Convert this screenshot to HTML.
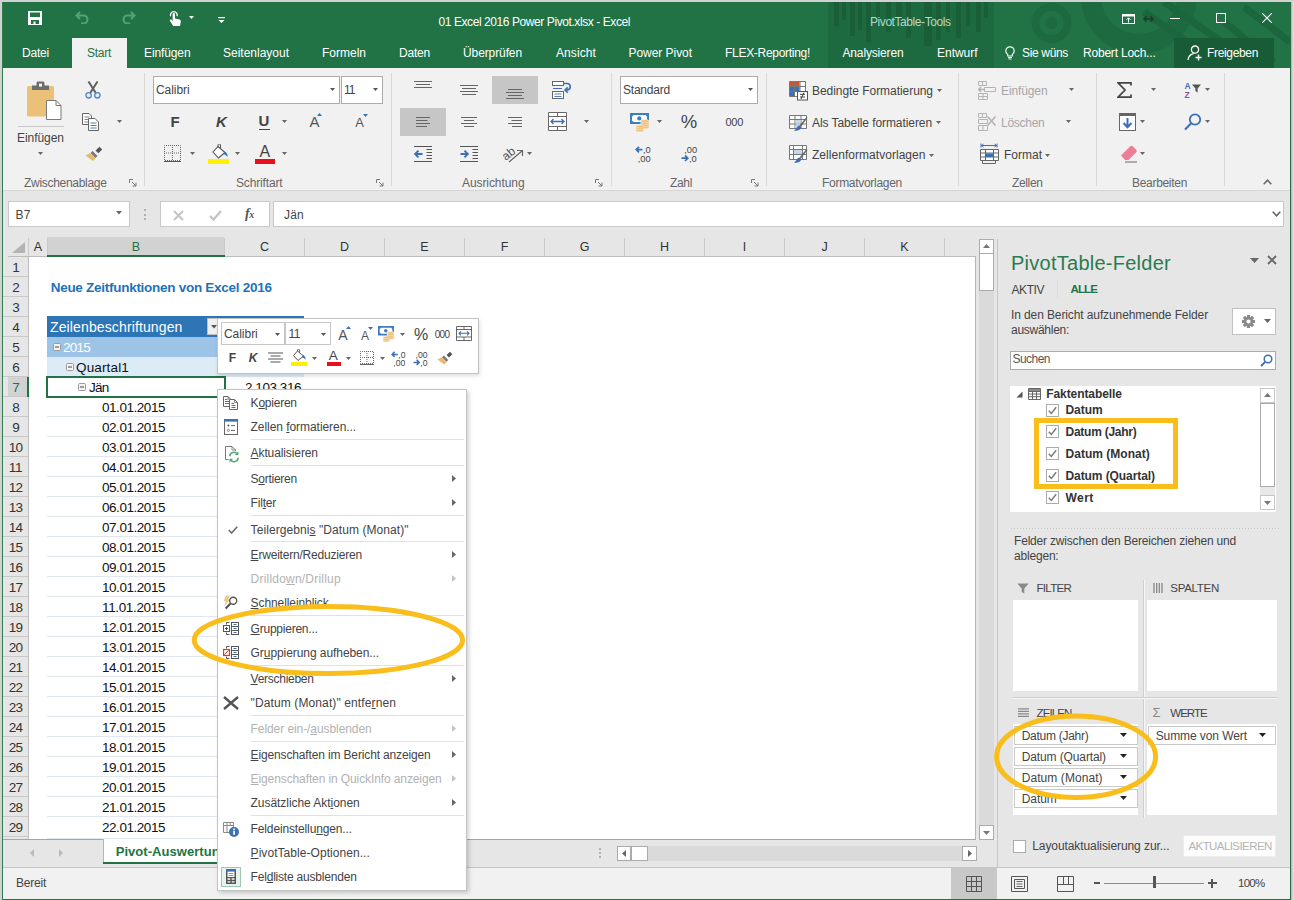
<!DOCTYPE html>
<html><head><meta charset="utf-8"><title>Excel</title>
<style>
html,body{margin:0;padding:0}
body{width:1294px;height:900px;position:relative;overflow:hidden;background:#f1f1f1;font-family:"Liberation Sans",sans-serif;}
.t{position:absolute;white-space:nowrap;overflow:visible}
.r{position:absolute;display:block}
u{text-decoration:underline;text-underline-offset:1px}
</style></head><body>
<!-- p_frame -->
<div class="r" style="left:0px;top:0px;width:1294px;height:900px;background:#d2d2d2;"></div>
<div class="r" style="left:2px;top:2px;width:1289px;height:898px;background:#f1f1f1;"></div>
<div class="r" style="left:2px;top:2px;width:1289px;height:66px;background:#217346;"></div>
<div class="r" style="left:828px;top:2px;width:166px;height:66px;background:#1e6a40;"></div>
<svg class="r" style="left:828px;top:2px;" width="166" height="50" viewBox="0 0 166 50"><rect x="6" y="0" width="5" height="24" fill="#1a5e38"/><rect x="14" y="0" width="4" height="18" fill="#1a5e38"/><rect x="22" y="0" width="5" height="34" fill="#1a5e38"/><rect x="30" y="0" width="4" height="28" fill="#1a5e38"/><rect x="38" y="0" width="5" height="40" fill="#1a5e38"/><rect x="48" y="0" width="4" height="22" fill="#1a5e38"/><rect x="58" y="0" width="5" height="30" fill="#1a5e38"/><rect x="68" y="0" width="6" height="20" fill="#1a5e38"/><rect x="78" y="0" width="5" height="36" fill="#1a5e38"/><rect x="96" y="0" width="8" height="44" fill="#1a5e38"/><rect x="108" y="0" width="5" height="38" fill="#1a5e38"/><rect x="118" y="0" width="4" height="30" fill="#1a5e38"/><rect x="128" y="0" width="5" height="36" fill="#1a5e38"/><rect x="138" y="0" width="4" height="24" fill="#1a5e38"/><rect x="148" y="0" width="5" height="30" fill="#1a5e38"/><rect x="156" y="0" width="4" height="16" fill="#1a5e38"/></svg>
<svg class="r" style="left:994px;top:2px;" width="296" height="66" viewBox="0 0 296 66"><circle cx="57.5" cy="21" r="16" fill="none" stroke="#1e6a40" stroke-width="8"/><circle cx="57.5" cy="21" r="6" fill="#1e6a40"/>
<circle cx="145" cy="-6" r="48" fill="none" stroke="#1e6a40" stroke-width="20"/>
<path d="M150 10 L215 55 M170 0 L235 45 M230 20 L280 60 M250 5 L296 40" stroke="#1c663d" stroke-width="7" fill="none"/></svg>
<div class="r" style="left:1174px;top:38px;width:100px;height:30px;background:#185c37;"></div>
<div class="r" style="left:72px;top:38px;width:55px;height:31px;background:#f1f1f1;"></div>
<svg class="r" style="left:28px;top:11px;" width="14" height="14" viewBox="0 0 14 14"><path d="M0 0H14V14H0Z M2 1.5V6H12V1.5Z M3 9V13H5.5V10.5H7.5V13H11V9Z" fill="#fff" fill-rule="evenodd"/></svg>
<svg class="r" style="left:75px;top:11px;" width="14" height="13" viewBox="0 0 14 13"><path d="M5 1 L1.5 4.5 L5 8 M1.5 4.5 H8.5 A4 4 0 0 1 8.5 12.5 H6" fill="none" stroke="#58a079" stroke-width="2"/></svg>
<svg class="r" style="left:122px;top:11px;" width="14" height="13" viewBox="0 0 14 13"><path d="M9 1 L12.5 4.5 L9 8 M12.5 4.5 H5.5 A4 4 0 0 0 5.5 12.5 H8" fill="none" stroke="#58a079" stroke-width="2"/></svg>
<svg class="r" style="left:168px;top:10px;" width="14" height="16" viewBox="0 0 14 16"><path d="M5.2 16 L2 11 C1.4 9.8 2.6 9 3.6 10 L4.6 11.2 V4.2 C4.6 2.6 7 2.6 7 4.2 V8.6 L11.4 9.6 C12.4 9.8 13 10.6 12.8 11.8 L12 16 Z" fill="#fff"/><path d="M2.6 6.2 A3.4 3.4 0 1 1 9 6.2" fill="none" stroke="#fff" stroke-width="1.3"/></svg>
<svg class="r" style="left:189px;top:16px;" width="5" height="3" viewBox="0 0 5 3"><path d="M0 0H5 L2.5 3 Z" fill="#fff"/></svg>
<svg class="r" style="left:218px;top:17px;" width="7" height="6" viewBox="0 0 7 6"><rect x="0" y="0" width="7" height="1.2" fill="#fff"/><path d="M0.5 3H6.5L3.5 6Z" fill="#fff"/></svg>
<div class="t" style="left:438.50px;top:14px;height:17px;line-height:17px;font-size:12px;color:#fff;letter-spacing:-0.419px;">01 Excel 2016 Power Pivot.xlsx - Excel</div>
<div class="t" style="left:870.00px;top:14px;height:17px;line-height:17px;font-size:12px;color:#b7d7c5;letter-spacing:-0.430px;">PivotTable-Tools</div>
<svg class="r" style="left:1122px;top:14px;" width="13" height="10" viewBox="0 0 13 10"><rect x="0.5" y="0.5" width="12" height="9" fill="none" stroke="#fff"/><rect x="0.5" y="0.5" width="12" height="2" fill="#fff"/><path d="M6.5 8.5V4 M4.5 5.8L6.5 3.8L8.5 5.8" stroke="#fff" fill="none"/></svg>
<svg class="r" style="left:1143px;top:15px;" width="11" height="8" viewBox="0 0 11 8"><path d="M1 4H10 M3.5 1.2L0.8 4L3.5 6.8 M7.5 1.2L10.2 4L7.5 6.8" stroke="#1d3a2a" stroke-width="1.3" fill="none"/></svg>
<div class="r" style="left:1170px;top:18px;width:10px;height:1px;background:#fff;"></div>
<div class="r" style="left:1216px;top:13px;width:10px;height:10px;border:1px solid #fff;box-sizing:border-box;"></div>
<svg class="r" style="left:1262px;top:13px;" width="10" height="10" viewBox="0 0 10 10"><path d="M0 0L10 10M10 0L0 10" stroke="#fff" stroke-width="1.1"/></svg>
<div class="t" style="left:22.00px;top:45px;height:17px;line-height:17px;font-size:12px;color:#fff;letter-spacing:-0.203px;">Datei</div>
<div class="t" style="left:144.00px;top:45px;height:17px;line-height:17px;font-size:12px;color:#fff;letter-spacing:-0.109px;">Einfügen</div>
<div class="t" style="left:223.00px;top:45px;height:17px;line-height:17px;font-size:12px;color:#fff;letter-spacing:-0.004px;">Seitenlayout</div>
<div class="t" style="left:322.00px;top:45px;height:17px;line-height:17px;font-size:12px;color:#fff;letter-spacing:-0.001px;">Formeln</div>
<div class="t" style="left:399.00px;top:45px;height:17px;line-height:17px;font-size:12px;color:#fff;letter-spacing:-0.204px;">Daten</div>
<div class="t" style="left:463.00px;top:45px;height:17px;line-height:17px;font-size:12px;color:#fff;letter-spacing:-0.104px;">Überprüfen</div>
<div class="t" style="left:556.00px;top:45px;height:17px;line-height:17px;font-size:12px;color:#fff;letter-spacing:0.093px;">Ansicht</div>
<div class="t" style="left:628.50px;top:45px;height:17px;line-height:17px;font-size:12px;color:#fff;letter-spacing:-0.048px;">Power Pivot</div>
<div class="t" style="left:725.00px;top:45px;height:17px;line-height:17px;font-size:12px;color:#fff;letter-spacing:-0.292px;">FLEX-Reporting!</div>
<div class="t" style="left:842.50px;top:45px;height:17px;line-height:17px;font-size:12px;color:#fff;letter-spacing:-0.155px;">Analysieren</div>
<div class="t" style="left:937.00px;top:45px;height:17px;line-height:17px;font-size:12px;color:#fff;letter-spacing:-0.026px;">Entwurf</div>
<div class="t" style="left:1022.00px;top:45px;height:17px;line-height:17px;font-size:12px;color:#fff;letter-spacing:-0.336px;">Sie wüns</div>
<div class="t" style="left:1083.00px;top:45px;height:17px;line-height:17px;font-size:12px;color:#fff;letter-spacing:-0.205px;">Robert Loch...</div>
<div class="t" style="left:1207.00px;top:45px;height:17px;line-height:17px;font-size:12px;color:#fff;letter-spacing:-0.337px;">Freigeben</div>
<div class="t" style="left:87.00px;top:45px;height:17px;line-height:17px;font-size:12px;color:#217346;letter-spacing:-0.268px;">Start</div>
<svg class="r" style="left:1005px;top:46px;" width="10" height="14" viewBox="0 0 10 14"><path d="M5 0.7 A4.2 4.2 0 0 1 7.3 8.4 V10H2.7V8.4 A4.2 4.2 0 0 1 5 0.7Z" fill="none" stroke="#fff" stroke-width="1.1"/><path d="M3 11.5H7 M3.5 13H6.5" stroke="#fff" stroke-width="1"/></svg>
<svg class="r" style="left:1187px;top:45px;" width="16" height="16" viewBox="0 0 16 16"><circle cx="8" cy="4.6" r="3.6" fill="none" stroke="#fff" stroke-width="1.3"/><path d="M1 15 C1.5 10.5 4.5 9 6.5 8.6" fill="none" stroke="#fff" stroke-width="1.3"/><path d="M11.5 9.5V15.5 M8.5 12.5H14.5" stroke="#fff" stroke-width="1.4"/></svg>
<!-- p_ribbon -->
<div class="r" style="left:2px;top:190px;width:1289px;height:1px;background:#d6d6d6;"></div>
<div class="r" style="left:2px;top:191px;width:1289px;height:47px;background:#e6e6e6;"></div>
<svg class="r" style="left:26px;top:81px;" width="36" height="39" viewBox="0 0 36 39"><rect x="1" y="5" width="27" height="30.5" rx="1.5" fill="#ebc177"/>
<path d="M6 4.5H10.5V2.2C10.5 1.2 11.2 0.6 12.2 0.6H16.8C17.8 0.6 18.5 1.2 18.5 2.2V4.5H23V9H6Z" fill="#6d6d6d"/><rect x="13" y="2.6" width="3" height="3" fill="#f1f1f1"/>
<path d="M20.5 19.5H30L35 24.5V38.5H20.5Z" fill="#fff" stroke="#7a7a7a" stroke-width="1"/><path d="M30 19.5V24.5H35" fill="none" stroke="#7a7a7a" stroke-width="1"/></svg>
<div class="r" style="left:17.5px;top:126px;width:46.5px;height:1px;background:#c9c9c9;"></div>
<div class="t" style="left:17.00px;top:130px;height:17px;line-height:17px;font-size:12px;color:#444;letter-spacing:-0.047px;">Einfügen</div>
<svg class="r" style="left:38px;top:151.5px;" width="5" height="3" viewBox="0 0 5 3"><path d="M0 0H5 L2.5 3 Z" fill="#666"/></svg>
<svg class="r" style="left:85px;top:81px;" width="16" height="18" viewBox="0 0 16 18"><path d="M3.5 0.5L10.8 12 M12.5 0.5L5.2 12" stroke="#606060" stroke-width="2" fill="none"/><circle cx="3.6" cy="14.3" r="2.7" fill="#e4edf8" stroke="#4f84c8" stroke-width="1.3"/><circle cx="12.4" cy="14.3" r="2.7" fill="#e4edf8" stroke="#4f84c8" stroke-width="1.3"/></svg>
<svg class="r" style="left:82px;top:113px;" width="17" height="18" viewBox="0 0 17 18"><path d="M0.5 0.5H7L9.5 3V11.5H0.5Z" fill="#fff" stroke="#666"/><path d="M2.5 4H7.5M2.5 6.5H7.5M2.5 9H6" stroke="#777" stroke-width="0.9"/>
<path d="M6.5 5.5H13L16.5 9V17.5H6.5Z" fill="#fff" stroke="#666"/><path d="M8.5 10H14.5M8.5 12.5H14.5M8.5 15H14.5" stroke="#3d6fb4" stroke-width="0.9"/></svg>
<svg class="r" style="left:116.5px;top:120px;" width="5" height="3" viewBox="0 0 5 3"><path d="M0 0H5 L2.5 3 Z" fill="#666"/></svg>
<svg class="r" style="left:85px;top:146px;" width="18" height="16" viewBox="0 0 18 16"><path d="M10.5 4.5L14.5 0.8L17.2 3.6L13.3 7.3Z" fill="#555"/><path d="M7.5 5L12.5 10L10.5 12L5.5 7Z" fill="#777"/><path d="M5 7L10.5 12.5L8 15L0.5 9.5Z" fill="#e8b96c"/></svg>
<div class="t" style="left:24.00px;top:175px;height:17px;line-height:17px;font-size:12px;color:#666;letter-spacing:-0.301px;">Zwischenablage</div>
<svg class="r" style="left:129px;top:179px;" width="8" height="8" viewBox="0 0 8 8"><path d="M0.5 4V0.5H4" fill="none" stroke="#777" stroke-width="1"/><path d="M3 3L7 7 M7 3.6V7H3.6" fill="none" stroke="#777" stroke-width="1"/></svg>
<div class="r" style="left:144px;top:73px;width:1px;height:113px;background:#dadada;"></div>
<div class="r" style="left:153px;top:76px;width:187px;height:28px;background:#fff;border:1px solid #ababab;box-sizing:border-box;"></div>
<div class="r" style="left:341px;top:76px;width:42px;height:28px;background:#fff;border:1px solid #ababab;box-sizing:border-box;"></div>
<div class="t" style="left:156.00px;top:82px;height:17px;line-height:17px;font-size:12px;color:#444;letter-spacing:-0.073px;">Calibri</div>
<svg class="r" style="left:329.5px;top:88px;" width="5" height="3" viewBox="0 0 5 3"><path d="M0 0H5 L2.5 3 Z" fill="#555"/></svg>
<div class="t" style="left:344.00px;top:82px;height:17px;line-height:17px;font-size:12px;color:#444;letter-spacing:-0.979px;">11</div>
<svg class="r" style="left:372.5px;top:88px;" width="5" height="3" viewBox="0 0 5 3"><path d="M0 0H5 L2.5 3 Z" fill="#555"/></svg>
<div class="t" style="left:170.42px;top:111px;height:21px;line-height:21px;font-size:15px;color:#444;font-weight:bold;">F</div>
<div class="t" style="left:216.08px;top:111px;height:21px;line-height:21px;font-size:15px;color:#444;font-weight:bold;font-style:italic;">K</div>
<div class="t" style="left:258.58px;top:110px;height:21px;line-height:21px;font-size:15px;color:#444;font-weight:bold;">U</div>
<div class="r" style="left:259px;top:129px;width:10.5px;height:1.2px;background:#444;"></div>
<svg class="r" style="left:281.5px;top:120px;" width="5" height="3" viewBox="0 0 5 3"><path d="M0 0H5 L2.5 3 Z" fill="#666"/></svg>
<div class="t" style="left:309.50px;top:111px;height:21px;line-height:21px;font-size:15px;color:#555;">A</div>
<svg class="r" style="left:317px;top:112.5px;" width="5" height="3" viewBox="0 0 5 3"><path d="M0 3H5L2.5 0Z" fill="#2e75b6"/></svg>
<div class="t" style="left:355.16px;top:114px;height:18px;line-height:18px;font-size:13px;color:#555;">A</div>
<svg class="r" style="left:363px;top:114px;" width="5" height="3" viewBox="0 0 5 3"><path d="M0 0H5L2.5 3Z" fill="#2e75b6"/></svg>
<svg class="r" style="left:164px;top:144.5px;" width="17" height="17" viewBox="0 0 17 17"><path d="M0.5 0.5H16.5V15.5H0.5Z M8.5 0.5V15.5 M0.5 8H16.5" fill="none" stroke="#666" stroke-width="1" stroke-dasharray="1 1" stroke-dashoffset="0.5"/><path d="M0 16.5H17" stroke="#555" stroke-width="1"/></svg>
<svg class="r" style="left:189.5px;top:151.5px;" width="5" height="3" viewBox="0 0 5 3"><path d="M0 0H5 L2.5 3 Z" fill="#666"/></svg>
<svg class="r" style="left:210px;top:144px;" width="20" height="15" viewBox="0 0 20 15"><path d="M8 2.5L15 8.5L8.5 14L3 8Z" fill="#fff" stroke="#555" stroke-width="1.1"/><path d="M8 2.5V0.8C8 -0.2 10.5 -0.2 10.5 0.8V4.5" fill="none" stroke="#555" stroke-width="1"/><path d="M14.5 7.5C17 8.5 18 11 17.5 13C16.5 11.5 15.5 10.5 13 10Z" fill="#3d6fb4"/></svg>
<div class="r" style="left:208px;top:159px;width:21px;height:5px;background:#ffef00;"></div>
<svg class="r" style="left:235px;top:151.5px;" width="5" height="3" viewBox="0 0 5 3"><path d="M0 0H5 L2.5 3 Z" fill="#666"/></svg>
<div class="t" style="left:259.46px;top:141px;height:22px;line-height:22px;font-size:16px;color:#444;">A</div>
<div class="r" style="left:254.5px;top:159px;width:20px;height:5px;background:#e8111b;"></div>
<svg class="r" style="left:281.5px;top:151.5px;" width="5" height="3" viewBox="0 0 5 3"><path d="M0 0H5 L2.5 3 Z" fill="#666"/></svg>
<div class="t" style="left:236.00px;top:175px;height:17px;line-height:17px;font-size:12px;color:#666;letter-spacing:-0.151px;">Schriftart</div>
<svg class="r" style="left:376px;top:179px;" width="8" height="8" viewBox="0 0 8 8"><path d="M0.5 4V0.5H4" fill="none" stroke="#777" stroke-width="1"/><path d="M3 3L7 7 M7 3.6V7H3.6" fill="none" stroke="#777" stroke-width="1"/></svg>
<div class="r" style="left:391px;top:73px;width:1px;height:113px;background:#dadada;"></div>
<div class="r" style="left:491.5px;top:76px;width:46.5px;height:28px;background:#c6c6c6;"></div>
<div class="r" style="left:400px;top:108px;width:46px;height:28px;background:#c6c6c6;"></div>
<svg class="r" style="left:414px;top:81px;" width="40" height="9" viewBox="0 0 40 9"><rect x="0" y="0" width="18" height="1" fill="#666"/><rect x="2" y="3" width="14" height="1" fill="#666"/><rect x="0" y="6" width="18" height="1" fill="#666"/></svg>
<svg class="r" style="left:460px;top:85px;" width="40" height="12" viewBox="0 0 40 12"><rect x="0" y="0" width="18" height="1" fill="#666"/><rect x="2" y="3" width="14" height="1" fill="#666"/><rect x="0" y="6" width="18" height="1" fill="#666"/><rect x="2" y="9" width="14" height="1" fill="#666"/></svg>
<svg class="r" style="left:506px;top:89px;" width="40" height="12" viewBox="0 0 40 12"><rect x="2" y="0" width="14" height="1" fill="#666"/><rect x="0" y="3" width="18" height="1" fill="#666"/><rect x="2" y="6" width="14" height="1" fill="#666"/><rect x="0" y="9" width="18" height="1" fill="#666"/></svg>
<svg class="r" style="left:552px;top:81px;" width="20" height="19" viewBox="0 0 20 19"><rect x="0.5" y="0.5" width="11" height="4" fill="#fff" stroke="#666"/><path d="M1 7.5H10" stroke="#3d6fb4"/><rect x="0.5" y="10.5" width="11" height="7" fill="#fff" stroke="#666"/><path d="M2.5 13H9.5M2.5 15.5H9.5" stroke="#3d6fb4" stroke-width="0.9"/><path d="M12 2.5H15C19.3 2.5 19.3 9 15 9H13.5 M15.8 6.3L13 9L15.8 11.7" fill="none" stroke="#3d6fb4" stroke-width="1.6"/></svg>
<svg class="r" style="left:416px;top:117px;" width="40" height="12" viewBox="0 0 40 12"><rect x="0" y="0" width="14" height="1" fill="#666"/><rect x="0" y="3" width="11.5" height="1" fill="#666"/><rect x="0" y="6" width="14" height="1" fill="#666"/><rect x="0" y="9" width="11" height="1" fill="#666"/></svg>
<svg class="r" style="left:461px;top:117px;" width="40" height="12" viewBox="0 0 40 12"><rect x="0" y="0" width="16" height="1" fill="#666"/><rect x="3" y="3" width="10" height="1" fill="#666"/><rect x="0" y="6" width="16" height="1" fill="#666"/><rect x="3" y="9" width="10" height="1" fill="#666"/></svg>
<svg class="r" style="left:508px;top:117px;" width="40" height="12" viewBox="0 0 40 12"><rect x="0" y="0" width="14" height="1" fill="#666"/><rect x="3.5" y="3" width="10.5" height="1" fill="#666"/><rect x="0" y="6" width="14" height="1" fill="#666"/><rect x="4" y="9" width="10" height="1" fill="#666"/></svg>
<svg class="r" style="left:548px;top:112px;" width="19" height="19" viewBox="0 0 19 19"><path d="M0.5 0.5H18.5V18.5H0.5Z M0.5 4.5H18.5 M0.5 14.5H18.5 M9.5 0.5V4.5 M9.5 14.5V18.5" fill="#fff" stroke="#666"/><path d="M3 9.5H16 M5.5 7L3 9.5L5.5 12 M13.5 7L16 9.5L13.5 12" fill="none" stroke="#3d6fb4" stroke-width="1.3"/></svg>
<svg class="r" style="left:583.5px;top:120px;" width="5" height="3" viewBox="0 0 5 3"><path d="M0 0H5 L2.5 3 Z" fill="#666"/></svg>
<svg class="r" style="left:414px;top:146px;" width="18" height="16" viewBox="0 0 18 16"><path d="M0 0.5H18 M12.5 3.5H18 M12.5 6.5H18 M12.5 9.5H18 M12.5 12.5H18 M0 15.5H18" stroke="#555" stroke-width="1"/><path d="M8.5 8H1.3 M4.5 4.7L1.2 8L4.5 11.3" fill="none" stroke="#3d6fb4" stroke-width="1.9"/></svg>
<svg class="r" style="left:460px;top:146px;" width="18" height="16" viewBox="0 0 18 16"><path d="M0 0.5H18 M12.5 3.5H18 M12.5 6.5H18 M12.5 9.5H18 M12.5 12.5H18 M0 15.5H18" stroke="#555" stroke-width="1"/><path d="M0.5 8H7.7 M4.5 4.7L7.8 8L4.5 11.3" fill="none" stroke="#3d6fb4" stroke-width="1.9"/></svg>
<div class="t" style="left:503px;top:144px;font-size:12px;color:#555;transform:rotate(-38deg);transform-origin:10px 10px;line-height:14px">ab</div>
<svg class="r" style="left:506px;top:148px;" width="19" height="15" viewBox="0 0 19 15"><path d="M3 14L16 3 M11 2.5H16.5V8" fill="none" stroke="#666" stroke-width="1.2"/></svg>
<svg class="r" style="left:526.5px;top:151.5px;" width="5" height="3" viewBox="0 0 5 3"><path d="M0 0H5 L2.5 3 Z" fill="#666"/></svg>
<div class="t" style="left:462.00px;top:175px;height:17px;line-height:17px;font-size:12px;color:#666;letter-spacing:-0.079px;">Ausrichtung</div>
<svg class="r" style="left:595px;top:179px;" width="8" height="8" viewBox="0 0 8 8"><path d="M0.5 4V0.5H4" fill="none" stroke="#777" stroke-width="1"/><path d="M3 3L7 7 M7 3.6V7H3.6" fill="none" stroke="#777" stroke-width="1"/></svg>
<div class="r" style="left:611px;top:73px;width:1px;height:113px;background:#dadada;"></div>
<div class="r" style="left:620px;top:76px;width:138px;height:28px;background:#fff;border:1px solid #ababab;box-sizing:border-box;"></div>
<div class="t" style="left:623.00px;top:82px;height:17px;line-height:17px;font-size:12px;color:#444;letter-spacing:-0.213px;">Standard</div>
<svg class="r" style="left:747.5px;top:88px;" width="5" height="3" viewBox="0 0 5 3"><path d="M0 0H5 L2.5 3 Z" fill="#555"/></svg>
<svg class="r" style="left:630px;top:113px;" width="20" height="19" viewBox="0 0 20 19"><rect x="0" y="0" width="19" height="11" fill="#3d7dc2"/><path d="M3.5 2H15.5L17 3.5V7.5L15.5 9H3.5L2 7.5V3.5Z" fill="#fff"/><circle cx="9.3" cy="5.4" r="2.1" fill="#3d7dc2"/><g fill="#edc27c" stroke="#f7e3bf" stroke-width="0.5"><rect x="6" y="12.3" width="7.5" height="6.5" rx="2" fill="#f1f1f1" stroke="none"/><rect x="10.6" y="6.6" width="8.6" height="9.5" rx="2" fill="#f1f1f1" stroke="none"/><ellipse cx="15" cy="14.2" rx="4" ry="1.4"/><ellipse cx="15" cy="12.2" rx="4" ry="1.4"/><ellipse cx="15" cy="10.2" rx="4" ry="1.4"/><ellipse cx="15" cy="8.2" rx="4" ry="1.4"/><ellipse cx="9.8" cy="17.4" rx="3.8" ry="1.3"/><ellipse cx="9.8" cy="15.5" rx="3.8" ry="1.3"/><ellipse cx="9.8" cy="13.6" rx="3.8" ry="1.3"/></g></svg>
<svg class="r" style="left:656.5px;top:120px;" width="5" height="3" viewBox="0 0 5 3"><path d="M0 0H5 L2.5 3 Z" fill="#666"/></svg>
<div class="t" style="left:680.75px;top:109px;height:26px;line-height:26px;font-size:18.5px;color:#444;letter-spacing:-0.949px;">%</div>
<div class="t" style="left:725.50px;top:115px;height:15px;line-height:15px;font-size:11px;color:#444;letter-spacing:-0.284px;">000</div>
<svg class="r" style="left:635px;top:146px;" width="18" height="17" viewBox="0 0 18 17"><text x="8" y="7" font-size="9.3" fill="#444" font-family="Liberation Sans">,0</text><text x="2.7" y="15.6" font-size="9.3" fill="#444" font-family="Liberation Sans">,00</text><path d="M7.5 3.6H1.5 M4 0.8L1.2 3.6L4 6.4" fill="none" stroke="#3d6fb4" stroke-width="1.7"/></svg>
<svg class="r" style="left:680.5px;top:146px;" width="18" height="17" viewBox="0 0 18 17"><text x="3.2" y="7" font-size="9.3" fill="#444" font-family="Liberation Sans">,00</text><text x="8" y="15.6" font-size="9.3" fill="#444" font-family="Liberation Sans">,0</text><path d="M0.5 12.2H6.5 M4 9.4L6.8 12.2L4 15" fill="none" stroke="#3d6fb4" stroke-width="1.7"/></svg>
<div class="t" style="left:670.00px;top:175px;height:17px;line-height:17px;font-size:12px;color:#666;letter-spacing:-0.336px;">Zahl</div>
<svg class="r" style="left:750.5px;top:179px;" width="8" height="8" viewBox="0 0 8 8"><path d="M0.5 4V0.5H4" fill="none" stroke="#777" stroke-width="1"/><path d="M3 3L7 7 M7 3.6V7H3.6" fill="none" stroke="#777" stroke-width="1"/></svg>
<div class="r" style="left:766px;top:73px;width:1px;height:113px;background:#dadada;"></div>
<svg class="r" style="left:789px;top:80.5px;" width="19" height="20" viewBox="0 0 19 20"><path d="M0.5 0.5H16.5V15.5H0.5Z M0.5 5.5H16.5 M0.5 10.5H16.5 M5.5 0.5V15.5 M11 0.5V15.5" fill="#fff" stroke="#777"/><rect x="1" y="1" width="4" height="4" fill="#d35230"/><rect x="6" y="1" width="4.5" height="4" fill="#d35230"/><rect x="1" y="6" width="4" height="4" fill="#3d6fb4"/><rect x="6" y="6" width="4.5" height="4" fill="#3d6fb4"/><rect x="1" y="11" width="4" height="4" fill="#3d6fb4"/><rect x="8.5" y="10.5" width="10" height="8.5" fill="#fff" stroke="#555"/><path d="M11 13.3H16 M11 16H16 M15 11.5L12 18" stroke="#444" stroke-width="1" fill="none"/></svg>
<div class="t" style="left:812.00px;top:83px;height:17px;line-height:17px;font-size:12px;color:#444;letter-spacing:-0.051px;">Bedingte Formatierung</div>
<svg class="r" style="left:936.5px;top:89px;" width="5" height="3" viewBox="0 0 5 3"><path d="M0 0H5 L2.5 3 Z" fill="#666"/></svg>
<svg class="r" style="left:789px;top:114.5px;" width="19" height="18" viewBox="0 0 19 18"><path d="M0.5 0.5H17.5V13.5H0.5Z M0.5 4.5H17.5 M0.5 9H17.5 M6 0.5V13.5 M12 0.5V13.5" fill="#fff" stroke="#777"/><rect x="6.5" y="5" width="5" height="3.5" fill="#c5d5ea"/><rect x="6.5" y="9.5" width="5" height="3.5" fill="#c5d5ea"/><path d="M18.5 3L12 11.5L10.5 10.5L17.5 2Z" fill="#666"/><path d="M10.5 10.5C8 10.5 8 14 5 15.5C8 16.5 12 15 12.5 12Z" fill="#3d6fb4"/></svg>
<div class="t" style="left:812.00px;top:115px;height:17px;line-height:17px;font-size:12px;color:#444;letter-spacing:-0.080px;">Als Tabelle formatieren</div>
<svg class="r" style="left:935.5px;top:121px;" width="5" height="3" viewBox="0 0 5 3"><path d="M0 0H5 L2.5 3 Z" fill="#666"/></svg>
<svg class="r" style="left:789px;top:144.5px;" width="19" height="20" viewBox="0 0 19 20"><path d="M0.5 0.5H17.5V14.5H0.5Z M0.5 4.5H17.5 M0.5 9.5H17.5 M4.5 0.5V14.5 M13.5 0.5V14.5" fill="#fff" stroke="#777"/><rect x="5" y="5" width="8" height="4" fill="#c5d5ea"/><path d="M18.5 5L12 13.5L10.5 12.5L17.5 4Z" fill="#666"/><path d="M10.5 12.5C8 12.5 8 16 5 17.5C8 18.5 12 17 12.5 14Z" fill="#3d6fb4"/></svg>
<div class="t" style="left:812.00px;top:147px;height:17px;line-height:17px;font-size:12px;color:#444;letter-spacing:0.039px;">Zellenformatvorlagen</div>
<svg class="r" style="left:928.5px;top:153.5px;" width="5" height="3" viewBox="0 0 5 3"><path d="M0 0H5 L2.5 3 Z" fill="#666"/></svg>
<div class="t" style="left:822.00px;top:175px;height:17px;line-height:17px;font-size:12px;color:#666;letter-spacing:-0.288px;">Formatvorlagen</div>
<div class="r" style="left:958px;top:73px;width:1px;height:113px;background:#dadada;"></div>
<svg class="r" style="left:977.5px;top:80.5px;" width="19" height="20" viewBox="0 0 19 20"><path d="M0.5 0.5H8.5V4.5H0.5Z M4.5 0.5V4.5 M0.5 12.5H9.5V18.5H0.5Z M5 12.5V18.5 M0.5 15.5H9.5" fill="none" stroke="#b4b4b4"/><path d="M6.5 6.5H17.5V10.5H6.5Z" fill="none" stroke="#b4b4b4"/><path d="M6 8.5H0.8 M3 6L0.6 8.5L3 11" fill="none" stroke="#b4b4b4" stroke-width="1.4"/></svg>
<div class="t" style="left:1001.00px;top:83px;height:17px;line-height:17px;font-size:12px;color:#a6a6a6;letter-spacing:-0.109px;">Einfügen</div>
<svg class="r" style="left:1068.5px;top:88px;" width="5" height="3" viewBox="0 0 5 3"><path d="M0 0H5 L2.5 3 Z" fill="#666"/></svg>
<svg class="r" style="left:977.5px;top:113px;" width="19" height="18" viewBox="0 0 19 18"><path d="M0.5 0.5H8.5V4.5H0.5Z M4.5 0.5V4.5 M0.5 12.5H9.5V17.5H0.5Z M5 12.5V17.5 M0.5 6.5H9.5V10.5H0.5Z" fill="none" stroke="#b4b4b4"/><path d="M9.5 3.5L17.5 12.5 M17.5 3.5L9.5 12.5" stroke="#b4b4b4" stroke-width="1.6"/></svg>
<div class="t" style="left:1001.00px;top:115px;height:17px;line-height:17px;font-size:12px;color:#a6a6a6;letter-spacing:-0.267px;">Löschen</div>
<svg class="r" style="left:1065.5px;top:120px;" width="5" height="3" viewBox="0 0 5 3"><path d="M0 0H5 L2.5 3 Z" fill="#666"/></svg>
<svg class="r" style="left:980px;top:143px;" width="19" height="21" viewBox="0 0 19 21"><path d="M1 0.5V4.5 M17 0.5V4.5 M1 2.5H17 M3.5 1L1.5 2.5L3.5 4 M14.5 1L16.5 2.5L14.5 4" fill="none" stroke="#3d6fb4" stroke-width="1"/><path d="M0.5 6.5H18.5V17.5H0.5Z M0.5 10H18.5 M0.5 14H18.5 M5.5 6.5V17.5 M13.5 6.5V17.5" fill="#fff" stroke="#666"/><rect x="6" y="10.5" width="7" height="3.5" fill="#3d6fb4"/><path d="M2.5 18V20.5H15.5V18" fill="none" stroke="#666"/></svg>
<div class="t" style="left:1004.00px;top:147px;height:17px;line-height:17px;font-size:12px;color:#444;letter-spacing:-0.001px;">Format</div>
<svg class="r" style="left:1045px;top:153.5px;" width="5" height="3" viewBox="0 0 5 3"><path d="M0 0H5 L2.5 3 Z" fill="#666"/></svg>
<div class="t" style="left:1012.00px;top:175px;height:17px;line-height:17px;font-size:12px;color:#666;letter-spacing:-0.364px;">Zellen</div>
<div class="r" style="left:1096px;top:73px;width:1px;height:113px;background:#dadada;"></div>
<svg class="r" style="left:1117px;top:82px;" width="15" height="16" viewBox="0 0 15 16"><path d="M14 3.5V0.8H1L8 8L1 15.2H14V12.5" fill="none" stroke="#444" stroke-width="1.7"/></svg>
<svg class="r" style="left:1150.5px;top:88px;" width="5" height="3" viewBox="0 0 5 3"><path d="M0 0H5 L2.5 3 Z" fill="#666"/></svg>
<svg class="r" style="left:1119px;top:112.5px;" width="17" height="18" viewBox="0 0 17 18"><rect x="0.5" y="0.5" width="16" height="17" fill="#fff" stroke="#666"/><rect x="0.5" y="0.5" width="16" height="2.5" fill="#666"/><path d="M8.5 5V14 M4.5 10L8.5 14.2L12.5 10" fill="none" stroke="#3d6fb4" stroke-width="2"/></svg>
<svg class="r" style="left:1140px;top:120px;" width="5" height="3" viewBox="0 0 5 3"><path d="M0 0H5 L2.5 3 Z" fill="#666"/></svg>
<svg class="r" style="left:1119.5px;top:144.5px;" width="18" height="18" viewBox="0 0 18 18"><path d="M1 10.5L10 1.5C11 0.5 12 0.5 13 1.5L16 4.5C17 5.5 17 6.5 16 7.5L8.5 15H5Z" fill="#ec7f97"/><path d="M5 17H17" stroke="#666" stroke-width="1"/></svg>
<svg class="r" style="left:1140px;top:151.5px;" width="5" height="3" viewBox="0 0 5 3"><path d="M0 0H5 L2.5 3 Z" fill="#666"/></svg>
<svg class="r" style="left:1184px;top:81px;" width="18" height="17" viewBox="0 0 18 17"><text x="0.5" y="7.5" font-size="8.5" font-weight="bold" fill="#3d6fb4" font-family="Liberation Sans">A</text><text x="0.5" y="16.5" font-size="8.5" font-weight="bold" fill="#8a4fa3" font-family="Liberation Sans">Z</text><path d="M8 3.5H17L13.6 7.5V11.5L11.4 10V7.5Z" fill="#555"/></svg>
<svg class="r" style="left:1204.5px;top:88px;" width="5" height="3" viewBox="0 0 5 3"><path d="M0 0H5 L2.5 3 Z" fill="#666"/></svg>
<svg class="r" style="left:1184px;top:113px;" width="18" height="18" viewBox="0 0 18 18"><circle cx="11" cy="6.5" r="5.2" fill="none" stroke="#3d6fb4" stroke-width="1.8"/><path d="M7 10.5L1 16.5" stroke="#3d6fb4" stroke-width="2.2"/></svg>
<svg class="r" style="left:1204.5px;top:120px;" width="5" height="3" viewBox="0 0 5 3"><path d="M0 0H5 L2.5 3 Z" fill="#666"/></svg>
<div class="t" style="left:1132.00px;top:175px;height:17px;line-height:17px;font-size:12px;color:#666;letter-spacing:-0.304px;">Bearbeiten</div>
<div class="r" style="left:1224px;top:73px;width:1px;height:113px;background:#dadada;"></div>
<svg class="r" style="left:1262.5px;top:179px;" width="9" height="6" viewBox="0 0 9 6"><path d="M0.7 5.3L4.5 1.2L8.3 5.3" fill="none" stroke="#666" stroke-width="1.5"/></svg>
<!-- p_sheet -->
<div class="r" style="left:3px;top:238px;width:6px;height:629px;background:#e6e6e6;"></div>
<div class="r" style="left:8px;top:201px;width:122px;height:26px;background:#fff;border:1px solid #c9c9c9;box-sizing:border-box;"></div>
<div class="t" style="left:15.50px;top:207px;height:17px;line-height:17px;font-size:12px;color:#444;letter-spacing:0.161px;">B7</div>
<svg class="r" style="left:116px;top:211.25px;" width="6" height="3.5" viewBox="0 0 6 3.5"><path d="M0 0H6 L3 3.5 Z" fill="#666"/></svg>
<div class="r" style="left:144px;top:209px;width:2px;height:2px;background:#b0b0b0;"></div>
<div class="r" style="left:144px;top:213.5px;width:2px;height:2px;background:#b0b0b0;"></div>
<div class="r" style="left:144px;top:218px;width:2px;height:2px;background:#b0b0b0;"></div>
<div class="r" style="left:160px;top:201px;width:110px;height:26px;background:#fff;border:1px solid #c9c9c9;box-sizing:border-box;"></div>
<svg class="r" style="left:173px;top:209.5px;" width="11" height="11" viewBox="0 0 11 11"><path d="M1 1L10 10M10 1L1 10" stroke="#c2c2c2" stroke-width="1.9"/></svg>
<svg class="r" style="left:209px;top:209.5px;" width="13" height="11" viewBox="0 0 13 11"><path d="M1 6L4.5 9.5L12 1" fill="none" stroke="#c2c2c2" stroke-width="2.3"/></svg>
<div class="t" style="left:245px;top:206px;font-family:'Liberation Serif',serif;font-style:italic;font-weight:bold;font-size:14px;color:#555;line-height:16px;letter-spacing:-0.5px">f<span style="font-size:10px">x</span></div>
<div class="r" style="left:273px;top:201px;width:1011px;height:26px;background:#fff;border:1px solid #c9c9c9;box-sizing:border-box;"></div>
<div class="t" style="left:284.00px;top:207px;height:17px;line-height:17px;font-size:12px;color:#444;letter-spacing:0.217px;">Jän</div>
<svg class="r" style="left:1272px;top:211px;" width="9" height="6" viewBox="0 0 9 6"><path d="M0.7 0.7L4.5 4.8L8.3 0.7" fill="none" stroke="#666" stroke-width="1.6"/></svg>
<div class="r" style="left:8px;top:237px;width:968px;height:20px;background:#e6e6e6;"></div>
<div class="r" style="left:8px;top:257px;width:21px;height:582px;background:#e6e6e6;"></div>
<svg class="r" style="left:12px;top:242px;" width="13" height="11" viewBox="0 0 13 11"><path d="M13 0V11H0Z" fill="#b4b4b4"/></svg>
<div class="r" style="left:29px;top:257px;width:946px;height:582px;background:#fff;"></div>
<div class="r" style="left:47px;top:237px;width:177px;height:19px;background:#d2d2d2;"></div>
<div class="r" style="left:47px;top:255px;width:178px;height:2px;background:#217346;"></div>
<div class="r" style="left:28px;top:238px;width:1px;height:18px;background:#c9c9c9;"></div>
<div class="t" style="left:33.83px;top:238px;height:18px;line-height:18px;font-size:12.5px;color:#333;">A</div>
<div class="r" style="left:47px;top:238px;width:1px;height:18px;background:#c9c9c9;"></div>
<div class="t" style="left:131.83px;top:238px;height:18px;line-height:18px;font-size:12.5px;color:#217346;">B</div>
<div class="r" style="left:224px;top:238px;width:1px;height:18px;background:#c9c9c9;"></div>
<div class="t" style="left:259.99px;top:238px;height:18px;line-height:18px;font-size:12.5px;color:#333;">C</div>
<div class="r" style="left:304px;top:238px;width:1px;height:18px;background:#c9c9c9;"></div>
<div class="t" style="left:339.99px;top:238px;height:18px;line-height:18px;font-size:12.5px;color:#333;">D</div>
<div class="r" style="left:384px;top:238px;width:1px;height:18px;background:#c9c9c9;"></div>
<div class="t" style="left:420.33px;top:238px;height:18px;line-height:18px;font-size:12.5px;color:#333;">E</div>
<div class="r" style="left:464px;top:238px;width:1px;height:18px;background:#c9c9c9;"></div>
<div class="t" style="left:500.68px;top:238px;height:18px;line-height:18px;font-size:12.5px;color:#333;">F</div>
<div class="r" style="left:544px;top:238px;width:1px;height:18px;background:#c9c9c9;"></div>
<div class="t" style="left:579.64px;top:238px;height:18px;line-height:18px;font-size:12.5px;color:#333;">G</div>
<div class="r" style="left:624px;top:238px;width:1px;height:18px;background:#c9c9c9;"></div>
<div class="t" style="left:659.99px;top:238px;height:18px;line-height:18px;font-size:12.5px;color:#333;">H</div>
<div class="r" style="left:704px;top:238px;width:1px;height:18px;background:#c9c9c9;"></div>
<div class="t" style="left:742.76px;top:238px;height:18px;line-height:18px;font-size:12.5px;color:#333;">I</div>
<div class="r" style="left:784px;top:238px;width:1px;height:18px;background:#c9c9c9;"></div>
<div class="t" style="left:821.38px;top:238px;height:18px;line-height:18px;font-size:12.5px;color:#333;">J</div>
<div class="r" style="left:864px;top:238px;width:1px;height:18px;background:#c9c9c9;"></div>
<div class="t" style="left:900.33px;top:238px;height:18px;line-height:18px;font-size:12.5px;color:#333;">K</div>
<div class="r" style="left:944px;top:238px;width:1px;height:18px;background:#c9c9c9;"></div>
<div class="r" style="left:8px;top:256px;width:968px;height:1px;background:#bdbdbd;"></div>
<div class="r" style="left:47px;top:255px;width:178px;height:2px;background:#217346;"></div>
<div class="r" style="left:8px;top:377px;width:21px;height:20px;background:#d2d2d2;"></div>
<div class="r" style="left:3px;top:276px;width:25px;height:1px;background:#c9c9c9;"></div>
<div class="t" style="left:12.25px;top:258px;height:19px;line-height:19px;font-size:13.5px;color:#333;letter-spacing:-1.008px;">1</div>
<div class="r" style="left:3px;top:296px;width:25px;height:1px;background:#c9c9c9;"></div>
<div class="t" style="left:12.25px;top:278px;height:19px;line-height:19px;font-size:13.5px;color:#333;letter-spacing:-1.008px;">2</div>
<div class="r" style="left:3px;top:316px;width:25px;height:1px;background:#c9c9c9;"></div>
<div class="t" style="left:12.25px;top:298px;height:19px;line-height:19px;font-size:13.5px;color:#333;letter-spacing:-1.008px;">3</div>
<div class="r" style="left:3px;top:336px;width:25px;height:1px;background:#c9c9c9;"></div>
<div class="t" style="left:12.25px;top:318px;height:19px;line-height:19px;font-size:13.5px;color:#333;letter-spacing:-1.008px;">4</div>
<div class="r" style="left:3px;top:356px;width:25px;height:1px;background:#c9c9c9;"></div>
<div class="t" style="left:12.25px;top:338px;height:19px;line-height:19px;font-size:13.5px;color:#333;letter-spacing:-1.008px;">5</div>
<div class="r" style="left:3px;top:376px;width:25px;height:1px;background:#c9c9c9;"></div>
<div class="t" style="left:12.25px;top:358px;height:19px;line-height:19px;font-size:13.5px;color:#333;letter-spacing:-1.008px;">6</div>
<div class="r" style="left:3px;top:396px;width:25px;height:1px;background:#c9c9c9;"></div>
<div class="t" style="left:12.25px;top:378px;height:19px;line-height:19px;font-size:13.5px;color:#217346;letter-spacing:-1.008px;">7</div>
<div class="r" style="left:3px;top:416px;width:25px;height:1px;background:#c9c9c9;"></div>
<div class="t" style="left:12.25px;top:398px;height:19px;line-height:19px;font-size:13.5px;color:#333;letter-spacing:-1.008px;">8</div>
<div class="r" style="left:3px;top:436px;width:25px;height:1px;background:#c9c9c9;"></div>
<div class="t" style="left:12.25px;top:418px;height:19px;line-height:19px;font-size:13.5px;color:#333;letter-spacing:-1.008px;">9</div>
<div class="r" style="left:3px;top:456px;width:25px;height:1px;background:#c9c9c9;"></div>
<div class="t" style="left:8.75px;top:438px;height:19px;line-height:19px;font-size:13.5px;color:#333;letter-spacing:-0.758px;">10</div>
<div class="r" style="left:3px;top:476px;width:25px;height:1px;background:#c9c9c9;"></div>
<div class="t" style="left:8.75px;top:458px;height:19px;line-height:19px;font-size:13.5px;color:#333;letter-spacing:-0.257px;">11</div>
<div class="r" style="left:3px;top:496px;width:25px;height:1px;background:#c9c9c9;"></div>
<div class="t" style="left:8.75px;top:478px;height:19px;line-height:19px;font-size:13.5px;color:#333;letter-spacing:-0.758px;">12</div>
<div class="r" style="left:3px;top:516px;width:25px;height:1px;background:#c9c9c9;"></div>
<div class="t" style="left:8.75px;top:498px;height:19px;line-height:19px;font-size:13.5px;color:#333;letter-spacing:-0.758px;">13</div>
<div class="r" style="left:3px;top:536px;width:25px;height:1px;background:#c9c9c9;"></div>
<div class="t" style="left:8.75px;top:518px;height:19px;line-height:19px;font-size:13.5px;color:#333;letter-spacing:-0.758px;">14</div>
<div class="r" style="left:3px;top:556px;width:25px;height:1px;background:#c9c9c9;"></div>
<div class="t" style="left:8.75px;top:538px;height:19px;line-height:19px;font-size:13.5px;color:#333;letter-spacing:-0.758px;">15</div>
<div class="r" style="left:3px;top:576px;width:25px;height:1px;background:#c9c9c9;"></div>
<div class="t" style="left:8.75px;top:558px;height:19px;line-height:19px;font-size:13.5px;color:#333;letter-spacing:-0.758px;">16</div>
<div class="r" style="left:3px;top:596px;width:25px;height:1px;background:#c9c9c9;"></div>
<div class="t" style="left:8.75px;top:578px;height:19px;line-height:19px;font-size:13.5px;color:#333;letter-spacing:-0.758px;">17</div>
<div class="r" style="left:3px;top:616px;width:25px;height:1px;background:#c9c9c9;"></div>
<div class="t" style="left:8.75px;top:598px;height:19px;line-height:19px;font-size:13.5px;color:#333;letter-spacing:-0.758px;">18</div>
<div class="r" style="left:3px;top:636px;width:25px;height:1px;background:#c9c9c9;"></div>
<div class="t" style="left:8.75px;top:618px;height:19px;line-height:19px;font-size:13.5px;color:#333;letter-spacing:-0.758px;">19</div>
<div class="r" style="left:3px;top:656px;width:25px;height:1px;background:#c9c9c9;"></div>
<div class="t" style="left:8.75px;top:638px;height:19px;line-height:19px;font-size:13.5px;color:#333;letter-spacing:-0.758px;">20</div>
<div class="r" style="left:3px;top:676px;width:25px;height:1px;background:#c9c9c9;"></div>
<div class="t" style="left:8.75px;top:658px;height:19px;line-height:19px;font-size:13.5px;color:#333;letter-spacing:-0.758px;">21</div>
<div class="r" style="left:3px;top:696px;width:25px;height:1px;background:#c9c9c9;"></div>
<div class="t" style="left:8.75px;top:678px;height:19px;line-height:19px;font-size:13.5px;color:#333;letter-spacing:-0.758px;">22</div>
<div class="r" style="left:3px;top:716px;width:25px;height:1px;background:#c9c9c9;"></div>
<div class="t" style="left:8.75px;top:698px;height:19px;line-height:19px;font-size:13.5px;color:#333;letter-spacing:-0.758px;">23</div>
<div class="r" style="left:3px;top:736px;width:25px;height:1px;background:#c9c9c9;"></div>
<div class="t" style="left:8.75px;top:718px;height:19px;line-height:19px;font-size:13.5px;color:#333;letter-spacing:-0.758px;">24</div>
<div class="r" style="left:3px;top:756px;width:25px;height:1px;background:#c9c9c9;"></div>
<div class="t" style="left:8.75px;top:738px;height:19px;line-height:19px;font-size:13.5px;color:#333;letter-spacing:-0.758px;">25</div>
<div class="r" style="left:3px;top:776px;width:25px;height:1px;background:#c9c9c9;"></div>
<div class="t" style="left:8.75px;top:758px;height:19px;line-height:19px;font-size:13.5px;color:#333;letter-spacing:-0.758px;">26</div>
<div class="r" style="left:3px;top:796px;width:25px;height:1px;background:#c9c9c9;"></div>
<div class="t" style="left:8.75px;top:778px;height:19px;line-height:19px;font-size:13.5px;color:#333;letter-spacing:-0.758px;">27</div>
<div class="r" style="left:3px;top:816px;width:25px;height:1px;background:#c9c9c9;"></div>
<div class="t" style="left:8.75px;top:798px;height:19px;line-height:19px;font-size:13.5px;color:#333;letter-spacing:-0.758px;">28</div>
<div class="r" style="left:3px;top:836px;width:25px;height:1px;background:#c9c9c9;"></div>
<div class="t" style="left:8.75px;top:818px;height:19px;line-height:19px;font-size:13.5px;color:#333;letter-spacing:-0.758px;">29</div>
<div class="r" style="left:28px;top:257px;width:1px;height:582px;background:#bdbdbd;"></div>
<div class="r" style="left:27px;top:377px;width:2px;height:20px;background:#217346;"></div>
<div class="r" style="left:975px;top:256px;width:1px;height:583px;background:#b5b5b5;"></div>
<div class="r" style="left:3px;top:839px;width:973px;height:1px;background:#a6a6a6;"></div>
<div class="t" style="left:50.70px;top:278px;height:19px;line-height:19px;font-size:13.5px;color:#1f72b8;letter-spacing:-0.274px;font-weight:bold;">Neue Zeitfunktionen von Excel 2016</div>
<div class="r" style="left:47px;top:316px;width:257px;height:21px;background:#2e75b6;"></div>
<div class="r" style="left:47px;top:337px;width:257px;height:20px;background:#9dc3e6;"></div>
<div class="r" style="left:47px;top:357px;width:257px;height:20px;background:#ddebf7;"></div>
<div class="t" style="left:50.00px;top:317px;height:20px;line-height:20px;font-size:14px;color:#fff;letter-spacing:0.126px;">Zeilenbeschriftungen</div>
<div class="r" style="left:207px;top:318px;width:14px;height:17px;background:#f0f0f0;border:1px solid #c0c0c0;box-sizing:border-box;"></div>
<svg class="r" style="left:211px;top:325.25px;" width="6" height="3.5" viewBox="0 0 6 3.5"><path d="M0 0H6 L3 3.5 Z" fill="#555"/></svg>
<svg class="r" style="left:53px;top:343px;" width="8" height="8" viewBox="0 0 8 8"><rect x="0.5" y="0.5" width="7" height="7" rx="1" fill="#f4f4f4" stroke="#9a9a9a"/><rect x="2" y="3.5" width="4" height="1" fill="#444"/></svg>
<div class="t" style="left:63.00px;top:338px;height:19px;line-height:19px;font-size:13.5px;color:#fff;letter-spacing:-0.758px;">2015</div>
<svg class="r" style="left:66px;top:363px;" width="8" height="8" viewBox="0 0 8 8"><rect x="0.5" y="0.5" width="7" height="7" rx="1" fill="#f4f4f4" stroke="#9a9a9a"/><rect x="2" y="3.5" width="4" height="1" fill="#444"/></svg>
<div class="t" style="left:76.00px;top:358px;height:19px;line-height:19px;font-size:13.5px;color:#111;letter-spacing:0.153px;">Quartal1</div>
<svg class="r" style="left:78px;top:383px;" width="8" height="8" viewBox="0 0 8 8"><rect x="0.5" y="0.5" width="7" height="7" rx="1" fill="#f4f4f4" stroke="#9a9a9a"/><rect x="2" y="3.5" width="4" height="1" fill="#444"/></svg>
<div class="t" style="left:89.00px;top:378px;height:19px;line-height:19px;font-size:13.5px;color:#111;letter-spacing:-0.755px;">Jän</div>
<div class="t" style="left:245.00px;top:378px;height:19px;line-height:19px;font-size:13.5px;color:#111;letter-spacing:-0.451px;">2.103.316</div>
<div class="r" style="left:47px;top:396px;width:257px;height:1px;background:#e0e7f0;"></div>
<div class="t" style="left:102.00px;top:398px;height:19px;line-height:19px;font-size:13.5px;color:#111;letter-spacing:-0.457px;">01.01.2015</div>
<div class="r" style="left:47px;top:416px;width:257px;height:1px;background:#e0e7f0;"></div>
<div class="t" style="left:102.00px;top:418px;height:19px;line-height:19px;font-size:13.5px;color:#111;letter-spacing:-0.457px;">02.01.2015</div>
<div class="r" style="left:47px;top:436px;width:257px;height:1px;background:#e0e7f0;"></div>
<div class="t" style="left:102.00px;top:438px;height:19px;line-height:19px;font-size:13.5px;color:#111;letter-spacing:-0.457px;">03.01.2015</div>
<div class="r" style="left:47px;top:456px;width:257px;height:1px;background:#e0e7f0;"></div>
<div class="t" style="left:102.00px;top:458px;height:19px;line-height:19px;font-size:13.5px;color:#111;letter-spacing:-0.457px;">04.01.2015</div>
<div class="r" style="left:47px;top:476px;width:257px;height:1px;background:#e0e7f0;"></div>
<div class="t" style="left:102.00px;top:478px;height:19px;line-height:19px;font-size:13.5px;color:#111;letter-spacing:-0.457px;">05.01.2015</div>
<div class="r" style="left:47px;top:496px;width:257px;height:1px;background:#e0e7f0;"></div>
<div class="t" style="left:102.00px;top:498px;height:19px;line-height:19px;font-size:13.5px;color:#111;letter-spacing:-0.457px;">06.01.2015</div>
<div class="r" style="left:47px;top:516px;width:257px;height:1px;background:#e0e7f0;"></div>
<div class="t" style="left:102.00px;top:518px;height:19px;line-height:19px;font-size:13.5px;color:#111;letter-spacing:-0.457px;">07.01.2015</div>
<div class="r" style="left:47px;top:536px;width:257px;height:1px;background:#e0e7f0;"></div>
<div class="t" style="left:102.00px;top:538px;height:19px;line-height:19px;font-size:13.5px;color:#111;letter-spacing:-0.457px;">08.01.2015</div>
<div class="r" style="left:47px;top:556px;width:257px;height:1px;background:#e0e7f0;"></div>
<div class="t" style="left:102.00px;top:558px;height:19px;line-height:19px;font-size:13.5px;color:#111;letter-spacing:-0.457px;">09.01.2015</div>
<div class="r" style="left:47px;top:576px;width:257px;height:1px;background:#e0e7f0;"></div>
<div class="t" style="left:102.00px;top:578px;height:19px;line-height:19px;font-size:13.5px;color:#111;letter-spacing:-0.457px;">10.01.2015</div>
<div class="r" style="left:47px;top:596px;width:257px;height:1px;background:#e0e7f0;"></div>
<div class="t" style="left:102.00px;top:598px;height:19px;line-height:19px;font-size:13.5px;color:#111;letter-spacing:-0.356px;">11.01.2015</div>
<div class="r" style="left:47px;top:616px;width:257px;height:1px;background:#e0e7f0;"></div>
<div class="t" style="left:102.00px;top:618px;height:19px;line-height:19px;font-size:13.5px;color:#111;letter-spacing:-0.457px;">12.01.2015</div>
<div class="r" style="left:47px;top:636px;width:257px;height:1px;background:#e0e7f0;"></div>
<div class="t" style="left:102.00px;top:638px;height:19px;line-height:19px;font-size:13.5px;color:#111;letter-spacing:-0.457px;">13.01.2015</div>
<div class="r" style="left:47px;top:656px;width:257px;height:1px;background:#e0e7f0;"></div>
<div class="t" style="left:102.00px;top:658px;height:19px;line-height:19px;font-size:13.5px;color:#111;letter-spacing:-0.457px;">14.01.2015</div>
<div class="r" style="left:47px;top:676px;width:257px;height:1px;background:#e0e7f0;"></div>
<div class="t" style="left:102.00px;top:678px;height:19px;line-height:19px;font-size:13.5px;color:#111;letter-spacing:-0.457px;">15.01.2015</div>
<div class="r" style="left:47px;top:696px;width:257px;height:1px;background:#e0e7f0;"></div>
<div class="t" style="left:102.00px;top:698px;height:19px;line-height:19px;font-size:13.5px;color:#111;letter-spacing:-0.457px;">16.01.2015</div>
<div class="r" style="left:47px;top:716px;width:257px;height:1px;background:#e0e7f0;"></div>
<div class="t" style="left:102.00px;top:718px;height:19px;line-height:19px;font-size:13.5px;color:#111;letter-spacing:-0.457px;">17.01.2015</div>
<div class="r" style="left:47px;top:736px;width:257px;height:1px;background:#e0e7f0;"></div>
<div class="t" style="left:102.00px;top:738px;height:19px;line-height:19px;font-size:13.5px;color:#111;letter-spacing:-0.457px;">18.01.2015</div>
<div class="r" style="left:47px;top:756px;width:257px;height:1px;background:#e0e7f0;"></div>
<div class="t" style="left:102.00px;top:758px;height:19px;line-height:19px;font-size:13.5px;color:#111;letter-spacing:-0.457px;">19.01.2015</div>
<div class="r" style="left:47px;top:776px;width:257px;height:1px;background:#e0e7f0;"></div>
<div class="t" style="left:102.00px;top:778px;height:19px;line-height:19px;font-size:13.5px;color:#111;letter-spacing:-0.457px;">20.01.2015</div>
<div class="r" style="left:47px;top:796px;width:257px;height:1px;background:#e0e7f0;"></div>
<div class="t" style="left:102.00px;top:798px;height:19px;line-height:19px;font-size:13.5px;color:#111;letter-spacing:-0.457px;">21.01.2015</div>
<div class="r" style="left:47px;top:816px;width:257px;height:1px;background:#e0e7f0;"></div>
<div class="t" style="left:102.00px;top:818px;height:19px;line-height:19px;font-size:13.5px;color:#111;letter-spacing:-0.457px;">22.01.2015</div>
<div class="r" style="left:47px;top:838px;width:257px;height:1px;background:#e0e7f0;"></div>
<div class="r" style="left:46px;top:376px;width:180px;height:22px;border:2px solid #217346;box-sizing:border-box;"></div>
<div class="r" style="left:976px;top:238px;width:22px;height:601px;background:#e6e6e6;"></div>
<div class="r" style="left:979px;top:239px;width:15px;height:15px;background:#fff;border:1px solid #ababab;box-sizing:border-box;"></div>
<svg class="r" style="left:983px;top:244px;" width="7" height="4" viewBox="0 0 7 4"><path d="M0 4H7L3.5 0Z" fill="#777"/></svg>
<div class="r" style="left:979px;top:253px;width:15px;height:38px;background:#fff;border:1px solid #ababab;box-sizing:border-box;"></div>
<div class="r" style="left:979px;top:291px;width:15px;height:534px;background:#dadada;"></div>
<div class="r" style="left:979px;top:825px;width:15px;height:15px;background:#fff;border:1px solid #ababab;box-sizing:border-box;"></div>
<svg class="r" style="left:983px;top:831px;" width="7" height="4" viewBox="0 0 7 4"><path d="M0 0H7L3.5 4Z" fill="#777"/></svg>
<div class="r" style="left:997px;top:239px;width:1px;height:629px;background:#c6c6c6;"></div>
<div class="r" style="left:8px;top:840px;width:989px;height:27px;background:#e6e6e6;"></div>
<svg class="r" style="left:30px;top:848.5px;" width="4" height="8" viewBox="0 0 4 8"><path d="M4 0V8L0 4Z" fill="#b9b9b9"/></svg>
<svg class="r" style="left:58.5px;top:848.5px;" width="4" height="8" viewBox="0 0 4 8"><path d="M0 0V8L4 4Z" fill="#b9b9b9"/></svg>
<div class="r" style="left:103px;top:839px;width:137px;height:24px;background:#fff;"></div>
<div class="r" style="left:103px;top:839px;width:1px;height:25px;background:#b5b5b5;"></div>
<div class="r" style="left:103px;top:862px;width:137px;height:2px;background:#217346;"></div>
<div class="t" style="left:115.70px;top:843px;height:18px;line-height:18px;font-size:13px;color:#217346;letter-spacing:0.048px;font-weight:bold;">Pivot-Auswertung</div>
<div class="r" style="left:599px;top:848px;width:2px;height:2px;background:#b0b0b0;"></div>
<div class="r" style="left:599px;top:852px;width:2px;height:2px;background:#b0b0b0;"></div>
<div class="r" style="left:599px;top:856px;width:2px;height:2px;background:#b0b0b0;"></div>
<div class="r" style="left:616.5px;top:846px;width:14.5px;height:15px;background:#fff;border:1px solid #ababab;box-sizing:border-box;"></div>
<svg class="r" style="left:622px;top:850px;" width="4" height="7" viewBox="0 0 4 7"><path d="M4 0V7L0 3.5Z" fill="#666"/></svg>
<div class="r" style="left:631px;top:846px;width:17px;height:15px;background:#fff;border:1px solid #ababab;box-sizing:border-box;"></div>
<div class="r" style="left:648px;top:846px;width:314px;height:15px;background:#dadada;"></div>
<div class="r" style="left:962px;top:846px;width:14.5px;height:15px;background:#fff;border:1px solid #ababab;box-sizing:border-box;"></div>
<svg class="r" style="left:967.5px;top:850px;" width="4" height="7" viewBox="0 0 4 7"><path d="M0 0V7L4 3.5Z" fill="#666"/></svg>
<div class="r" style="left:2px;top:867px;width:1289px;height:1px;background:#c6c6c6;"></div>
<div class="r" style="left:3px;top:868px;width:1287px;height:31px;background:#f1f1f1;"></div>
<div class="t" style="left:16.00px;top:875px;height:17px;line-height:17px;font-size:12px;color:#444;letter-spacing:-0.225px;">Bereit</div>
<div class="r" style="left:951px;top:868px;width:46px;height:31px;background:#c8c8c8;"></div>
<svg class="r" style="left:966px;top:876px;" width="16" height="16" viewBox="0 0 16 16"><path d="M0.5 0.5H15.5V15.5H0.5Z M0.5 5.5H15.5 M0.5 10.5H15.5 M5.5 0.5V15.5 M10.5 0.5V15.5" fill="none" stroke="#555"/></svg>
<svg class="r" style="left:1011px;top:876px;" width="17" height="16" viewBox="0 0 17 16"><path d="M0.5 0.5H16.5V15.5H0.5Z" fill="none" stroke="#555"/><path d="M3.5 3.5H13.5V12.5H3.5Z" fill="none" stroke="#555"/><path d="M5.5 5.5H11.5M5.5 8H11.5M5.5 10.5H11.5" stroke="#666" stroke-width="1"/></svg>
<svg class="r" style="left:1057px;top:876px;" width="17" height="16" viewBox="0 0 17 16"><path d="M0.5 0.5H16.5V15.5H0.5Z" fill="none" stroke="#555"/><path d="M6.5 0.5V8.5H11.5V0.5 M0.5 8.5H16.5" fill="none" stroke="#555"/></svg>
<div class="r" style="left:1094px;top:882px;width:6px;height:2px;background:#555;"></div>
<div class="r" style="left:1104px;top:883px;width:100px;height:1px;background:#8a8a8a;"></div>
<div class="r" style="left:1152.5px;top:876px;width:3px;height:12px;background:#555;"></div>
<div class="r" style="left:1207.5px;top:882px;width:9px;height:2px;background:#555;"></div>
<div class="r" style="left:1211px;top:878.5px;width:2px;height:9px;background:#555;"></div>
<div class="t" style="left:1238.00px;top:875px;height:16px;line-height:16px;font-size:11.5px;color:#444;letter-spacing:-0.728px;">100%</div>
<!-- p_pane -->
<div class="r" style="left:998px;top:238px;width:292px;height:629px;background:#e6e6e6;"></div>
<div class="t" style="left:1011.00px;top:249px;height:28px;line-height:28px;font-size:20px;color:#2b7a50;letter-spacing:0.257px;">PivotTable-Felder</div>
<svg class="r" style="left:1250px;top:258px;" width="9" height="5" viewBox="0 0 9 5"><path d="M0 0H9 L4.5 5 Z" fill="#666"/></svg>
<svg class="r" style="left:1267px;top:255px;" width="10" height="10" viewBox="0 0 10 10"><path d="M1 1L9 9M9 1L1 9" stroke="#666" stroke-width="1.8"/></svg>
<div class="t" style="left:1011.50px;top:282px;height:17px;line-height:17px;font-size:12px;color:#444;letter-spacing:-0.435px;">AKTIV</div>
<div class="r" style="left:1057px;top:281px;width:1px;height:17px;background:#dcdcdc;"></div>
<div class="t" style="left:1070.50px;top:281px;height:16px;line-height:16px;font-size:11.5px;color:#217346;letter-spacing:-0.881px;font-weight:bold;">ALLE</div>
<div class="t" style="left:1011.00px;top:307px;height:17px;line-height:17px;font-size:12px;color:#444;letter-spacing:-0.108px;">In den Bericht aufzunehmende Felder</div>
<div class="t" style="left:1011.00px;top:322px;height:17px;line-height:17px;font-size:12px;color:#444;letter-spacing:-0.271px;">auswählen:</div>
<div class="r" style="left:1232px;top:308px;width:44px;height:27px;background:#fff;border:1px solid #c0c0c0;box-sizing:border-box;"></div>
<svg class="r" style="left:1241.5px;top:314.5px;" width="13" height="13" viewBox="0 0 13 13"><g transform="translate(6.5 6.5)"><g fill="#8a8a8a"><rect x="-1.6" y="-6.5" width="3.2" height="13" transform="rotate(0)"/><rect x="-1.6" y="-6.5" width="3.2" height="13" transform="rotate(45)"/><rect x="-1.6" y="-6.5" width="3.2" height="13" transform="rotate(90)"/><rect x="-1.6" y="-6.5" width="3.2" height="13" transform="rotate(135)"/></g><circle r="4.6" fill="#8a8a8a"/><circle r="2.1" fill="#fff"/></g></svg>
<svg class="r" style="left:1263.5px;top:319px;" width="7" height="4" viewBox="0 0 7 4"><path d="M0 0H7 L3.5 4 Z" fill="#666"/></svg>
<div class="r" style="left:1010px;top:350.5px;width:266px;height:19px;background:#fff;border:1px solid #ababab;box-sizing:border-box;"></div>
<div class="t" style="left:1012.50px;top:351px;height:17px;line-height:17px;font-size:12px;color:#555;letter-spacing:-0.533px;">Suchen</div>
<svg class="r" style="left:1260px;top:354px;" width="13" height="13" viewBox="0 0 13 13"><circle cx="8" cy="5" r="3.8" fill="none" stroke="#3d6fb4" stroke-width="1.5"/><path d="M5.2 7.8L1 12" stroke="#3d6fb4" stroke-width="1.9"/></svg>
<div class="r" style="left:1010px;top:386px;width:266px;height:125.5px;background:#fff;"></div>
<svg class="r" style="left:1016px;top:390.5px;" width="7" height="7" viewBox="0 0 7 7"><path d="M6.5 0.5V6.5H0.5Z" fill="#555"/></svg>
<svg class="r" style="left:1028px;top:388px;" width="13" height="12" viewBox="0 0 13 12"><path d="M0.5 0.5H12.5V11.5H0.5Z M0.5 3.5H12.5 M0.5 6H12.5 M0.5 8.7H12.5 M4.5 3.5V11.5 M8.5 3.5V11.5" fill="#fff" stroke="#666"/><rect x="1" y="1" width="11" height="2" fill="#8a8a8a"/></svg>
<div class="t" style="left:1046.30px;top:386px;height:17px;line-height:17px;font-size:12px;color:#333;letter-spacing:-0.092px;font-weight:bold;">Faktentabelle</div>
<svg class="r" style="left:1046px;top:403.7px;" width="13" height="13" viewBox="0 0 13 13"><rect x="0.5" y="0.5" width="12" height="12" fill="#fff" stroke="#ababab"/><path d="M2.8 6.8L5.3 9.5L10.2 3.2" fill="none" stroke="#777" stroke-width="1.4"/></svg>
<div class="t" style="left:1065.50px;top:402px;height:17px;line-height:17px;font-size:12px;color:#333;letter-spacing:-0.067px;font-weight:bold;">Datum</div>
<svg class="r" style="left:1046px;top:425.3px;" width="13" height="13" viewBox="0 0 13 13"><rect x="0.5" y="0.5" width="12" height="12" fill="#fff" stroke="#ababab"/><path d="M2.8 6.8L5.3 9.5L10.2 3.2" fill="none" stroke="#777" stroke-width="1.4"/></svg>
<div class="t" style="left:1065.50px;top:424px;height:17px;line-height:17px;font-size:12px;color:#333;letter-spacing:-0.251px;font-weight:bold;">Datum (Jahr)</div>
<svg class="r" style="left:1046px;top:447.3px;" width="13" height="13" viewBox="0 0 13 13"><rect x="0.5" y="0.5" width="12" height="12" fill="#fff" stroke="#ababab"/><path d="M2.8 6.8L5.3 9.5L10.2 3.2" fill="none" stroke="#777" stroke-width="1.4"/></svg>
<div class="t" style="left:1065.50px;top:446px;height:17px;line-height:17px;font-size:12px;color:#333;letter-spacing:0.024px;font-weight:bold;">Datum (Monat)</div>
<svg class="r" style="left:1046px;top:469.2px;" width="13" height="13" viewBox="0 0 13 13"><rect x="0.5" y="0.5" width="12" height="12" fill="#fff" stroke="#ababab"/><path d="M2.8 6.8L5.3 9.5L10.2 3.2" fill="none" stroke="#777" stroke-width="1.4"/></svg>
<div class="t" style="left:1065.50px;top:468px;height:17px;line-height:17px;font-size:12px;color:#333;letter-spacing:-0.085px;font-weight:bold;">Datum (Quartal)</div>
<svg class="r" style="left:1046px;top:491.2px;" width="13" height="13" viewBox="0 0 13 13"><rect x="0.5" y="0.5" width="12" height="12" fill="#fff" stroke="#ababab"/><path d="M2.8 6.8L5.3 9.5L10.2 3.2" fill="none" stroke="#777" stroke-width="1.4"/></svg>
<div class="t" style="left:1065.50px;top:490px;height:17px;line-height:17px;font-size:12px;color:#333;letter-spacing:0.438px;font-weight:bold;">Wert</div>
<div class="r" style="left:1260px;top:388px;width:15px;height:122px;background:#e8e8e8;"></div>
<div class="r" style="left:1260px;top:388px;width:15px;height:15px;background:#fff;border:1px solid #c6c6c6;box-sizing:border-box;"></div>
<svg class="r" style="left:1264px;top:393px;" width="7" height="4" viewBox="0 0 7 4"><path d="M0 4H7L3.5 0Z" fill="#777"/></svg>
<div class="r" style="left:1260px;top:402.5px;width:15px;height:84.5px;background:#fff;border:1px solid #ababab;box-sizing:border-box;"></div>
<div class="r" style="left:1260px;top:495px;width:15px;height:15px;background:#fff;border:1px solid #c6c6c6;box-sizing:border-box;"></div>
<svg class="r" style="left:1264px;top:501px;" width="7" height="4" viewBox="0 0 7 4"><path d="M0 0H7L3.5 4Z" fill="#777"/></svg>
<div class="r" style="left:1034px;top:418px;width:144px;height:71px;border:5px solid #f9be1b;box-sizing:border-box;"></div>
<div class="r" style="left:1011px;top:528px;width:268px;height:1px;background:repeating-linear-gradient(90deg,#c4c4c4 0 1px,transparent 1px 3px)"></div>
<div class="t" style="left:1014.00px;top:533px;height:17px;line-height:17px;font-size:12px;color:#444;letter-spacing:-0.187px;">Felder zwischen den Bereichen ziehen und</div>
<div class="t" style="left:1014.00px;top:548px;height:17px;line-height:17px;font-size:12px;color:#444;letter-spacing:-0.193px;">ablegen:</div>
<svg class="r" style="left:1016.5px;top:582.5px;" width="12" height="11" viewBox="0 0 12 11"><path d="M0.3 0.5H11.7L7.3 5.5V10.5L4.7 9V5.5Z" fill="#8a8a8a"/></svg>
<div class="t" style="left:1036.50px;top:580px;height:16px;line-height:16px;font-size:11.5px;color:#444;letter-spacing:-0.710px;">FILTER</div>
<svg class="r" style="left:1152.5px;top:582.5px;" width="10" height="10" viewBox="0 0 10 10"><path d="M1 0V10M3.7 0V10M6.3 0V10M9 0V10" stroke="#8a8a8a" stroke-width="1.3"/></svg>
<div class="t" style="left:1170.30px;top:580px;height:16px;line-height:16px;font-size:11.5px;color:#444;letter-spacing:-0.300px;">SPALTEN</div>
<div class="r" style="left:1013px;top:600px;width:125px;height:91px;background:#fff;"></div>
<div class="r" style="left:1147px;top:600px;width:130px;height:91px;background:#fff;"></div>
<div class="r" style="left:1143px;top:580px;width:1px;height:238px;background:#cfcfcf;"></div>
<div class="r" style="left:1144px;top:580px;width:1px;height:238px;background:#f6f6f6;"></div>
<div class="r" style="left:1013px;top:697px;width:264px;height:1px;background:#cfcfcf;"></div>
<div class="r" style="left:1013px;top:698px;width:264px;height:1px;background:#f6f6f6;"></div>
<svg class="r" style="left:1017.5px;top:708px;" width="11" height="9" viewBox="0 0 11 9"><path d="M0 0.8H11M0 3.3H11M0 5.8H11M0 8.3H11" stroke="#8a8a8a" stroke-width="1.2"/></svg>
<div class="t" style="left:1036.50px;top:705px;height:16px;line-height:16px;font-size:11.5px;color:#444;letter-spacing:-0.877px;">ZEILEN</div>
<div class="t" style="left:1152.50px;top:704px;height:18px;line-height:18px;font-size:13px;color:#8a8a8a;">Σ</div>
<div class="t" style="left:1170.30px;top:705px;height:16px;line-height:16px;font-size:11.5px;color:#444;letter-spacing:-1.003px;">WERTE</div>
<div class="r" style="left:1013px;top:724px;width:125px;height:91px;background:#fff;"></div>
<div class="r" style="left:1147px;top:724px;width:130px;height:91px;background:#fff;"></div>
<div class="r" style="left:1014px;top:726px;width:123.5px;height:19px;background:#fff;border:1px solid #c9c9c9;box-sizing:border-box;"></div><div class="t" style="left:1021.70px;top:728px;height:17px;line-height:17px;font-size:12px;color:#444;letter-spacing:-0.276px;">Datum (Jahr)</div><svg class="r" style="left:1119.9px;top:733px;" width="7" height="4" viewBox="0 0 7 4"><path d="M0 0H7 L3.5 4 Z" fill="#222"/></svg>
<div class="r" style="left:1014px;top:747px;width:123.5px;height:19px;background:#fff;border:1px solid #c9c9c9;box-sizing:border-box;"></div><div class="t" style="left:1021.70px;top:749px;height:17px;line-height:17px;font-size:12px;color:#444;letter-spacing:-0.115px;">Datum (Quartal)</div><svg class="r" style="left:1119.9px;top:754px;" width="7" height="4" viewBox="0 0 7 4"><path d="M0 0H7 L3.5 4 Z" fill="#222"/></svg>
<div class="r" style="left:1014px;top:768px;width:123.5px;height:19px;background:#fff;border:1px solid #c9c9c9;box-sizing:border-box;"></div><div class="t" style="left:1021.70px;top:770px;height:17px;line-height:17px;font-size:12px;color:#444;letter-spacing:0.075px;">Datum (Monat)</div><svg class="r" style="left:1119.9px;top:775px;" width="7" height="4" viewBox="0 0 7 4"><path d="M0 0H7 L3.5 4 Z" fill="#222"/></svg>
<div class="r" style="left:1014px;top:789px;width:123.5px;height:19px;background:#fff;border:1px solid #c9c9c9;box-sizing:border-box;"></div><div class="t" style="left:1021.70px;top:791px;height:17px;line-height:17px;font-size:12px;color:#444;letter-spacing:-0.069px;">Datum</div><svg class="r" style="left:1119.9px;top:796px;" width="7" height="4" viewBox="0 0 7 4"><path d="M0 0H7 L3.5 4 Z" fill="#222"/></svg>
<div class="r" style="left:1148px;top:726px;width:128px;height:19px;background:#fff;border:1px solid #c9c9c9;box-sizing:border-box;"></div><div class="t" style="left:1155.70px;top:728px;height:17px;line-height:17px;font-size:12px;color:#444;letter-spacing:-0.084px;">Summe von Wert</div><svg class="r" style="left:1258.9px;top:733px;" width="7" height="4" viewBox="0 0 7 4"><path d="M0 0H7 L3.5 4 Z" fill="#222"/></svg>
<div class="r" style="left:1013px;top:840px;width:13px;height:13px;background:#fff;border:1px solid #ababab;box-sizing:border-box;"></div>
<div class="t" style="left:1032.20px;top:838px;height:17px;line-height:17px;font-size:12px;color:#444;letter-spacing:-0.078px;">Layoutaktualisierung zur...</div>
<div class="r" style="left:1183px;top:835px;width:93px;height:22px;background:#fdfdfd;border:1px solid #ececec;box-sizing:border-box;"></div>
<div class="t" style="left:1188.50px;top:838px;height:16px;line-height:16px;font-size:11.5px;color:#b4b4b4;letter-spacing:-0.581px;">AKTUALISIEREN</div>
<svg class="r" style="left:985px;top:700px;" width="185" height="112" viewBox="0 0 185 112"><ellipse cx="91.1" cy="56.7" rx="79.5" ry="40.8" fill="none" stroke="#f9be1b" stroke-width="5"/></svg>
<!-- p_menu -->
<div class="r" style="left:217px;top:318px;width:262px;height:56px;background:#fff;border:1px solid #c3c3c3;box-sizing:border-box;box-shadow:1px 2px 4px rgba(0,0,0,.13);"></div>
<div class="r" style="left:221px;top:322px;width:64px;height:23px;background:#fff;border:1px solid #c6c6c6;box-sizing:border-box;"></div>
<div class="r" style="left:285px;top:322px;width:46px;height:23px;background:#fff;border:1px solid #c6c6c6;box-sizing:border-box;"></div>
<div class="t" style="left:224.00px;top:326px;height:17px;line-height:17px;font-size:12px;color:#444;letter-spacing:-0.044px;">Calibri</div>
<svg class="r" style="left:274.9px;top:332.5px;" width="5" height="3" viewBox="0 0 5 3"><path d="M0 0H5 L2.5 3 Z" fill="#555"/></svg>
<div class="t" style="left:288.60px;top:326px;height:17px;line-height:17px;font-size:12px;color:#444;letter-spacing:-0.729px;">11</div>
<svg class="r" style="left:320.9px;top:332.5px;" width="5" height="3" viewBox="0 0 5 3"><path d="M0 0H5 L2.5 3 Z" fill="#555"/></svg>
<div class="t" style="left:338.33px;top:325px;height:20px;line-height:20px;font-size:14px;color:#555;">A</div>
<svg class="r" style="left:345.5px;top:326px;" width="5" height="3" viewBox="0 0 5 3"><path d="M0 3H5L2.5 0Z" fill="#3d6fb4"/></svg>
<div class="t" style="left:361.00px;top:328px;height:17px;line-height:17px;font-size:12px;color:#555;">A</div>
<svg class="r" style="left:367.5px;top:327px;" width="5" height="3" viewBox="0 0 5 3"><path d="M0 0H5L2.5 3Z" fill="#3d6fb4"/></svg>
<svg class="r" style="left:378px;top:325.5px;" width="17" height="16" viewBox="0 0 17 16"><rect x="0" y="0" width="16" height="9.5" fill="#3d7dc2"/><path d="M3 1.7H13L14.3 3V6.5L13 7.8H3L1.7 6.5V3Z" fill="#fff"/><circle cx="7.8" cy="4.7" r="1.8" fill="#3d7dc2"/><g fill="#edc27c" stroke="#f7e3bf" stroke-width="0.45"><rect x="5" y="10.3" width="6.5" height="5.7" rx="1.5" fill="#fff" stroke="none"/><rect x="9" y="5.6" width="7.4" height="8" rx="1.5" fill="#fff" stroke="none"/><ellipse cx="12.7" cy="12" rx="3.4" ry="1.2"/><ellipse cx="12.7" cy="10.3" rx="3.4" ry="1.2"/><ellipse cx="12.7" cy="8.6" rx="3.4" ry="1.2"/><ellipse cx="12.7" cy="6.9" rx="3.4" ry="1.2"/><ellipse cx="8.3" cy="14.8" rx="3.2" ry="1.1"/><ellipse cx="8.3" cy="13.2" rx="3.2" ry="1.1"/><ellipse cx="8.3" cy="11.6" rx="3.2" ry="1.1"/></g></svg>
<svg class="r" style="left:400.1px;top:332.5px;" width="5" height="3" viewBox="0 0 5 3"><path d="M0 0H5 L2.5 3 Z" fill="#666"/></svg>
<div class="t" style="left:414.00px;top:324px;height:22px;line-height:22px;font-size:16px;color:#444;letter-spacing:-1.226px;">%</div>
<div class="t" style="left:434.70px;top:328px;height:14px;line-height:14px;font-size:10px;color:#444;letter-spacing:-0.662px;">000</div>
<svg class="r" style="left:456px;top:326px;" width="16" height="15" viewBox="0 0 16 15"><path d="M0.5 0.5H15.5V14.5H0.5Z M0.5 3.5H15.5 M0.5 11H15.5 M8 0.5V3.5 M8 11V14.5" fill="#fff" stroke="#666"/><path d="M3 7.3H13 M5 5.3L3 7.3L5 9.3 M11 5.3L13 7.3L11 9.3" fill="none" stroke="#3d6fb4" stroke-width="1.1"/></svg>
<div class="t" style="left:228.63px;top:350px;height:17px;line-height:17px;font-size:12px;color:#444;font-weight:bold;">F</div>
<div class="t" style="left:248.67px;top:350px;height:17px;line-height:17px;font-size:12px;color:#444;font-weight:bold;font-style:italic;">K</div>
<svg class="r" style="left:268px;top:352px;" width="15" height="12" viewBox="0 0 15 12"><path d="M0 1H15M2.5 4H12.5M0 7H15M2.5 10H12.5" stroke="#555" stroke-width="1"/></svg>
<svg class="r" style="left:291px;top:349px;" width="16" height="12" viewBox="0 0 16 12"><path d="M6.5 2L12.5 7L7 11.5L2.5 6.5Z" fill="#fff" stroke="#555" stroke-width="1"/><path d="M6.5 2V0.8C6.5 0 8.6 0 8.6 0.8V3.8" fill="none" stroke="#555" stroke-width="0.9"/><path d="M12 6C14 7 15 9 14.5 10.8C13.7 9.6 12.9 8.8 10.8 8.3Z" fill="#3d6fb4"/></svg>
<div class="r" style="left:290.5px;top:362px;width:16px;height:4px;background:#ffef00;"></div>
<svg class="r" style="left:311.5px;top:356.5px;" width="5" height="3" viewBox="0 0 5 3"><path d="M0 0H5 L2.5 3 Z" fill="#666"/></svg>
<div class="t" style="left:328.80px;top:346px;height:19px;line-height:19px;font-size:13.5px;color:#444;">A</div>
<div class="r" style="left:326.5px;top:362px;width:14px;height:4px;background:#e8111b;"></div>
<svg class="r" style="left:346px;top:356.5px;" width="5" height="3" viewBox="0 0 5 3"><path d="M0 0H5 L2.5 3 Z" fill="#666"/></svg>
<svg class="r" style="left:359.5px;top:351px;" width="14" height="14" viewBox="0 0 14 14"><path d="M0.5 0.5H13.5V12.5H0.5Z M7 0.5V12.5 M0.5 6.5H13.5" fill="none" stroke="#666" stroke-width="1" stroke-dasharray="1 1" stroke-dashoffset="0.5"/><path d="M0 13.5H14" stroke="#666" stroke-width="1"/></svg>
<svg class="r" style="left:380px;top:356.5px;" width="5" height="3" viewBox="0 0 5 3"><path d="M0 0H5 L2.5 3 Z" fill="#666"/></svg>
<svg class="r" style="left:391.4px;top:350.5px;" width="16" height="16" viewBox="0 0 16 16"><text x="7.3" y="6.6" font-size="8.6" fill="#444" font-family="Liberation Sans">,0</text><text x="2.3" y="14.6" font-size="8.6" fill="#444" font-family="Liberation Sans">,00</text><path d="M6.8 3.4H1.3 M3.6 0.9L1.1 3.4L3.6 5.9" fill="none" stroke="#3d6fb4" stroke-width="1.5"/></svg>
<svg class="r" style="left:413.4px;top:350.5px;" width="16" height="16" viewBox="0 0 16 16"><text x="2.6" y="6.6" font-size="8.6" fill="#444" font-family="Liberation Sans">,00</text><text x="7.3" y="14.6" font-size="8.6" fill="#444" font-family="Liberation Sans">,0</text><path d="M0.5 11.4H6 M3.7 8.9L6.2 11.4L3.7 13.9" fill="none" stroke="#3d6fb4" stroke-width="1.5"/></svg>
<svg class="r" style="left:436.5px;top:350.5px;" width="16" height="15" viewBox="0 0 16 15"><path d="M9.5 4L13 0.7L15.4 3.2L12 6.5Z" fill="#555"/><path d="M6.8 4.5L11.2 9L9.5 10.7L5 6.2Z" fill="#777"/><path d="M4.5 6.2L9.5 11.2L7.2 13.5L0.5 8.5Z" fill="#e8b96c"/></svg>
<div class="r" style="left:217px;top:389px;width:250px;height:502px;background:#fff;border:1px solid #c3c3c3;box-sizing:border-box;box-shadow:2px 2px 4px rgba(0,0,0,.18);"></div>
<div class="t" style="left:250.60px;top:395px;height:17px;line-height:17px;font-size:12px;color:#444;letter-spacing:-0.229px;">K<u>o</u>pieren</div>
<div class="t" style="left:250.60px;top:419px;height:17px;line-height:17px;font-size:12px;color:#444;letter-spacing:-0.058px;">Zellen <u>f</u>ormatieren...</div>
<div class="t" style="left:250.60px;top:445px;height:17px;line-height:17px;font-size:12px;color:#444;letter-spacing:-0.108px;"><u>A</u>ktualisieren</div>
<div class="t" style="left:250.60px;top:471px;height:17px;line-height:17px;font-size:12px;color:#444;letter-spacing:-0.277px;">S<u>o</u>rtieren</div>
<svg class="r" style="left:451.8px;top:475px;" width="4" height="7" viewBox="0 0 4 7"><path d="M0 0V7 L4 3.5 Z" fill="#666"/></svg>
<div class="t" style="left:250.60px;top:495px;height:17px;line-height:17px;font-size:12px;color:#444;letter-spacing:-0.211px;">Fil<u>t</u>er</div>
<svg class="r" style="left:451.8px;top:498.8px;" width="4" height="7" viewBox="0 0 4 7"><path d="M0 0V7 L4 3.5 Z" fill="#666"/></svg>
<div class="t" style="left:250.60px;top:522px;height:17px;line-height:17px;font-size:12px;color:#444;letter-spacing:0.075px;">Teilergebni<u>s</u> "Datum (Monat)"</div>
<div class="t" style="left:250.60px;top:547px;height:17px;line-height:17px;font-size:12px;color:#444;letter-spacing:-0.204px;"><u>E</u>rweitern/Reduzieren</div>
<svg class="r" style="left:451.8px;top:550.9px;" width="4" height="7" viewBox="0 0 4 7"><path d="M0 0V7 L4 3.5 Z" fill="#666"/></svg>
<div class="t" style="left:250.60px;top:571px;height:17px;line-height:17px;font-size:12px;color:#b2b2b2;letter-spacing:0.206px;">Drilldo<u>w</u>n/Drillup</div>
<svg class="r" style="left:451.8px;top:574.8px;" width="4" height="7" viewBox="0 0 4 7"><path d="M0 0V7 L4 3.5 Z" fill="#c4c4c4"/></svg>
<div class="t" style="left:250.60px;top:595px;height:17px;line-height:17px;font-size:12px;color:#444;letter-spacing:-0.092px;"><u>S</u>chnelleinblick</div>
<div class="t" style="left:250.60px;top:621px;height:17px;line-height:17px;font-size:12px;color:#444;letter-spacing:-0.234px;"><u>G</u>ruppieren...</div>
<div class="t" style="left:250.60px;top:645px;height:17px;line-height:17px;font-size:12px;color:#444;letter-spacing:-0.069px;">Gr<u>u</u>ppierung aufheben...</div>
<div class="t" style="left:250.60px;top:671px;height:17px;line-height:17px;font-size:12px;color:#444;letter-spacing:-0.277px;"><u>V</u>erschieben</div>
<svg class="r" style="left:451.8px;top:674.9px;" width="4" height="7" viewBox="0 0 4 7"><path d="M0 0V7 L4 3.5 Z" fill="#666"/></svg>
<div class="t" style="left:250.60px;top:695px;height:17px;line-height:17px;font-size:12px;color:#444;letter-spacing:0.113px;">"Datum (Monat)" entfe<u>r</u>nen</div>
<div class="t" style="left:250.60px;top:721px;height:17px;line-height:17px;font-size:12px;color:#b2b2b2;letter-spacing:-0.079px;">Felder ein-/<u>a</u>usblenden</div>
<svg class="r" style="left:451.8px;top:724.8px;" width="4" height="7" viewBox="0 0 4 7"><path d="M0 0V7 L4 3.5 Z" fill="#c4c4c4"/></svg>
<div class="t" style="left:250.60px;top:747px;height:17px;line-height:17px;font-size:12px;color:#444;letter-spacing:-0.145px;"><u>E</u>igenschaften im Bericht anzeigen</div>
<svg class="r" style="left:451.8px;top:750.7px;" width="4" height="7" viewBox="0 0 4 7"><path d="M0 0V7 L4 3.5 Z" fill="#666"/></svg>
<div class="t" style="left:250.60px;top:771px;height:17px;line-height:17px;font-size:12px;color:#b2b2b2;letter-spacing:-0.108px;"><u>E</u>igenschaften in QuickInfo anzeigen</div>
<svg class="r" style="left:451.8px;top:774.8px;" width="4" height="7" viewBox="0 0 4 7"><path d="M0 0V7 L4 3.5 Z" fill="#c4c4c4"/></svg>
<div class="t" style="left:250.60px;top:795px;height:17px;line-height:17px;font-size:12px;color:#444;letter-spacing:-0.053px;">Zusätzliche Akt<u>i</u>onen</div>
<svg class="r" style="left:451.8px;top:798.5px;" width="4" height="7" viewBox="0 0 4 7"><path d="M0 0V7 L4 3.5 Z" fill="#666"/></svg>
<div class="t" style="left:250.60px;top:821px;height:17px;line-height:17px;font-size:12px;color:#444;letter-spacing:-0.138px;">Feldeinstellu<u>n</u>gen...</div>
<div class="t" style="left:250.60px;top:845px;height:17px;line-height:17px;font-size:12px;color:#444;letter-spacing:0.052px;"><u>P</u>ivotTable-Optionen...</div>
<div class="t" style="left:250.60px;top:869px;height:17px;line-height:17px;font-size:12px;color:#444;letter-spacing:-0.204px;">Fel<u>d</u>liste ausblenden</div>
<div class="r" style="left:250.6px;top:439px;width:213.5px;height:1px;background:#e1e1e1;"></div>
<div class="r" style="left:250.6px;top:465px;width:213.5px;height:1px;background:#e1e1e1;"></div>
<div class="r" style="left:250.6px;top:515px;width:213.5px;height:1px;background:#e1e1e1;"></div>
<div class="r" style="left:250.6px;top:541px;width:213.5px;height:1px;background:#e1e1e1;"></div>
<div class="r" style="left:250.6px;top:615px;width:213.5px;height:1px;background:#e1e1e1;"></div>
<div class="r" style="left:250.6px;top:665px;width:213.5px;height:1px;background:#e1e1e1;"></div>
<div class="r" style="left:250.6px;top:715px;width:213.5px;height:1px;background:#e1e1e1;"></div>
<div class="r" style="left:250.6px;top:741px;width:213.5px;height:1px;background:#e1e1e1;"></div>
<div class="r" style="left:250.6px;top:815px;width:213.5px;height:1px;background:#e1e1e1;"></div>
<svg class="r" style="left:223px;top:396px;" width="15" height="14" viewBox="0 0 15 14"><path d="M0.5 0.5H5L7.5 3V10.5H0.5Z" fill="#fff" stroke="#666"/><path d="M5 0.5V3H7.5" fill="none" stroke="#666" stroke-width="0.8"/><path d="M2 3.5H4.5M2 5.5H6M2 7.5H6" stroke="#3d6fb4" stroke-width="1"/><path d="M6.5 3.5H11.5L14.5 6.5V13.5H6.5Z" fill="#fff" stroke="#666"/><path d="M11.5 3.5V6.5H14.5" fill="none" stroke="#666" stroke-width="0.8"/><path d="M8.5 7.5H11M8.5 9.5H12.5M8.5 11.5H12.5" stroke="#3d6fb4" stroke-width="1"/></svg>
<svg class="r" style="left:224px;top:419px;" width="14" height="16" viewBox="0 0 14 16"><rect x="0.5" y="0.5" width="13" height="15" fill="#fff" stroke="#666"/><rect x="0" y="0" width="14" height="2.6" fill="#3d6fb4"/><circle cx="4.4" cy="6.6" r="1.1" fill="#666"/><circle cx="4.4" cy="11.4" r="1" fill="none" stroke="#666" stroke-width="0.8"/><path d="M7 6.6H11M7 11.4H11" stroke="#666" stroke-width="1"/></svg>
<svg class="r" style="left:225px;top:445.5px;" width="15" height="17" viewBox="0 0 15 17"><path d="M3.5 13.5H0.5V0.5H7L10.5 4V5" fill="none" stroke="#777"/><path d="M7 0.5V4H10.5" fill="none" stroke="#777" stroke-width="0.8"/><path d="M4.7 10.2A4.2 4.2 0 0 1 12.3 8 M13.2 11.8A4.2 4.2 0 0 1 5.6 14" fill="none" stroke="#55a67c" stroke-width="1.6"/><path d="M13.4 5.2V9H9.8Z M4.5 16.6V12.8H8.1Z" fill="#55a67c"/></svg>
<svg class="r" style="left:228px;top:525.5px;" width="10" height="8" viewBox="0 0 10 8"><path d="M0.8 4L3.6 7L9.2 0.8" fill="none" stroke="#666" stroke-width="1.5"/></svg>
<svg class="r" style="left:222px;top:595px;" width="16" height="15" viewBox="0 0 16 15"><path d="M4 0.5H8L6 4.2H8.2L2.2 11.5L3.8 6.2H1.5Z" fill="#e9c88f"/><circle cx="11.2" cy="5.8" r="3.5" fill="none" stroke="#555" stroke-width="1.4"/><path d="M8.3 8.8L3.6 13.5" stroke="#555" stroke-width="2.2"/></svg>
<svg class="r" style="left:223px;top:622px;" width="16" height="13" viewBox="0 0 16 13"><rect x="8.5" y="0.5" width="7" height="12" fill="#fff" stroke="#555"/><path d="M8.5 4.5H15.5M8.5 8.5H15.5" stroke="#555"/><path d="M10.5 2.5H13.5M10.5 6.5H13.5M10.5 10.5H13.5" stroke="#3d6fb4"/><path d="M3.5 2.5V0.5H6.5 M3.5 10.5V12.5H6.5" fill="none" stroke="#555"/><rect x="0.5" y="3.5" width="6" height="6" fill="#fff" stroke="#555"/><path d="M2 6.5H5M3.5 5V8" stroke="#444" stroke-width="1"/></svg>
<svg class="r" style="left:223px;top:646px;" width="16" height="13" viewBox="0 0 16 13"><rect x="8.5" y="0.5" width="7" height="12" fill="#fff" stroke="#555"/><path d="M8.5 4.5H15.5M8.5 8.5H15.5" stroke="#555"/><path d="M10.5 2.5H13.5M10.5 6.5H13.5M10.5 10.5H13.5" stroke="#3d6fb4"/><path d="M3.5 2.5V0.5H6.5 M3.5 10.5V12.5H6.5" fill="none" stroke="#555"/><rect x="0.5" y="3.5" width="6" height="6" fill="#fff" stroke="#c8442d" stroke-width="1.2"/><path d="M1.3 8.7L5.7 4.3" stroke="#c8442d" stroke-width="1"/></svg>
<svg class="r" style="left:223px;top:696px;" width="16" height="14" viewBox="0 0 16 14"><path d="M1 1L15 13M15 1L1 13" stroke="#555" stroke-width="2.4"/></svg>
<svg class="r" style="left:223px;top:821.5px;" width="17" height="16" viewBox="0 0 17 16"><path d="M0.5 0.5H10.5V10.5H0.5Z M0.5 3.5H10.5 M4 0.5V10.5 M7.2 0.5V3.5" fill="#fff" stroke="#8a8a8a"/><circle cx="11" cy="10" r="5" fill="#3d6fb4"/><rect x="10.2" y="8.8" width="1.7" height="4" fill="#fff"/><rect x="10.2" y="6.5" width="1.7" height="1.6" fill="#fff"/></svg>
<div class="r" style="left:221px;top:867px;width:20px;height:20px;background:#e9f3ed;border:1px solid #9ec8b0;box-sizing:border-box;"></div>
<svg class="r" style="left:226px;top:869px;" width="10" height="15" viewBox="0 0 10 15"><rect x="0.75" y="0.75" width="8.5" height="13.5" fill="#fff" stroke="#555" stroke-width="1.5"/><rect x="0" y="0" width="10" height="2.6" fill="#3d6fb4"/><path d="M2.5 4.5H7.5M2.5 6.5H7.5" stroke="#8a8a8a" stroke-width="0.9"/><path d="M0.75 8.6H9.25 M0.75 11.5H9.25 M5 8.6V14.25" stroke="#555" stroke-width="1.4" fill="none"/></svg>
<svg class="r" style="left:185px;top:598px;" width="290" height="82" viewBox="0 0 290 82"><ellipse cx="143.4" cy="42" rx="134.2" ry="33.5" fill="none" stroke="#f9be1b" stroke-width="5"/></svg>
<!-- p_last -->
<div class="r" style="left:1290px;top:2px;width:1px;height:898px;background:#2e6b4a;"></div>
<div class="r" style="left:1291px;top:2px;width:1px;height:898px;background:#a9c0b3;"></div>
<div class="r" style="left:1292px;top:2px;width:1px;height:898px;background:#cdd6d1;"></div>
<div class="r" style="left:1293px;top:2px;width:1px;height:898px;background:#dedede;"></div>
<div class="r" style="left:2px;top:899px;width:1289px;height:1px;background:#2e6b4a;"></div>
<div class="r" style="left:2px;top:2px;width:1px;height:898px;background:#2e7d4f;"></div>
</body></html>
